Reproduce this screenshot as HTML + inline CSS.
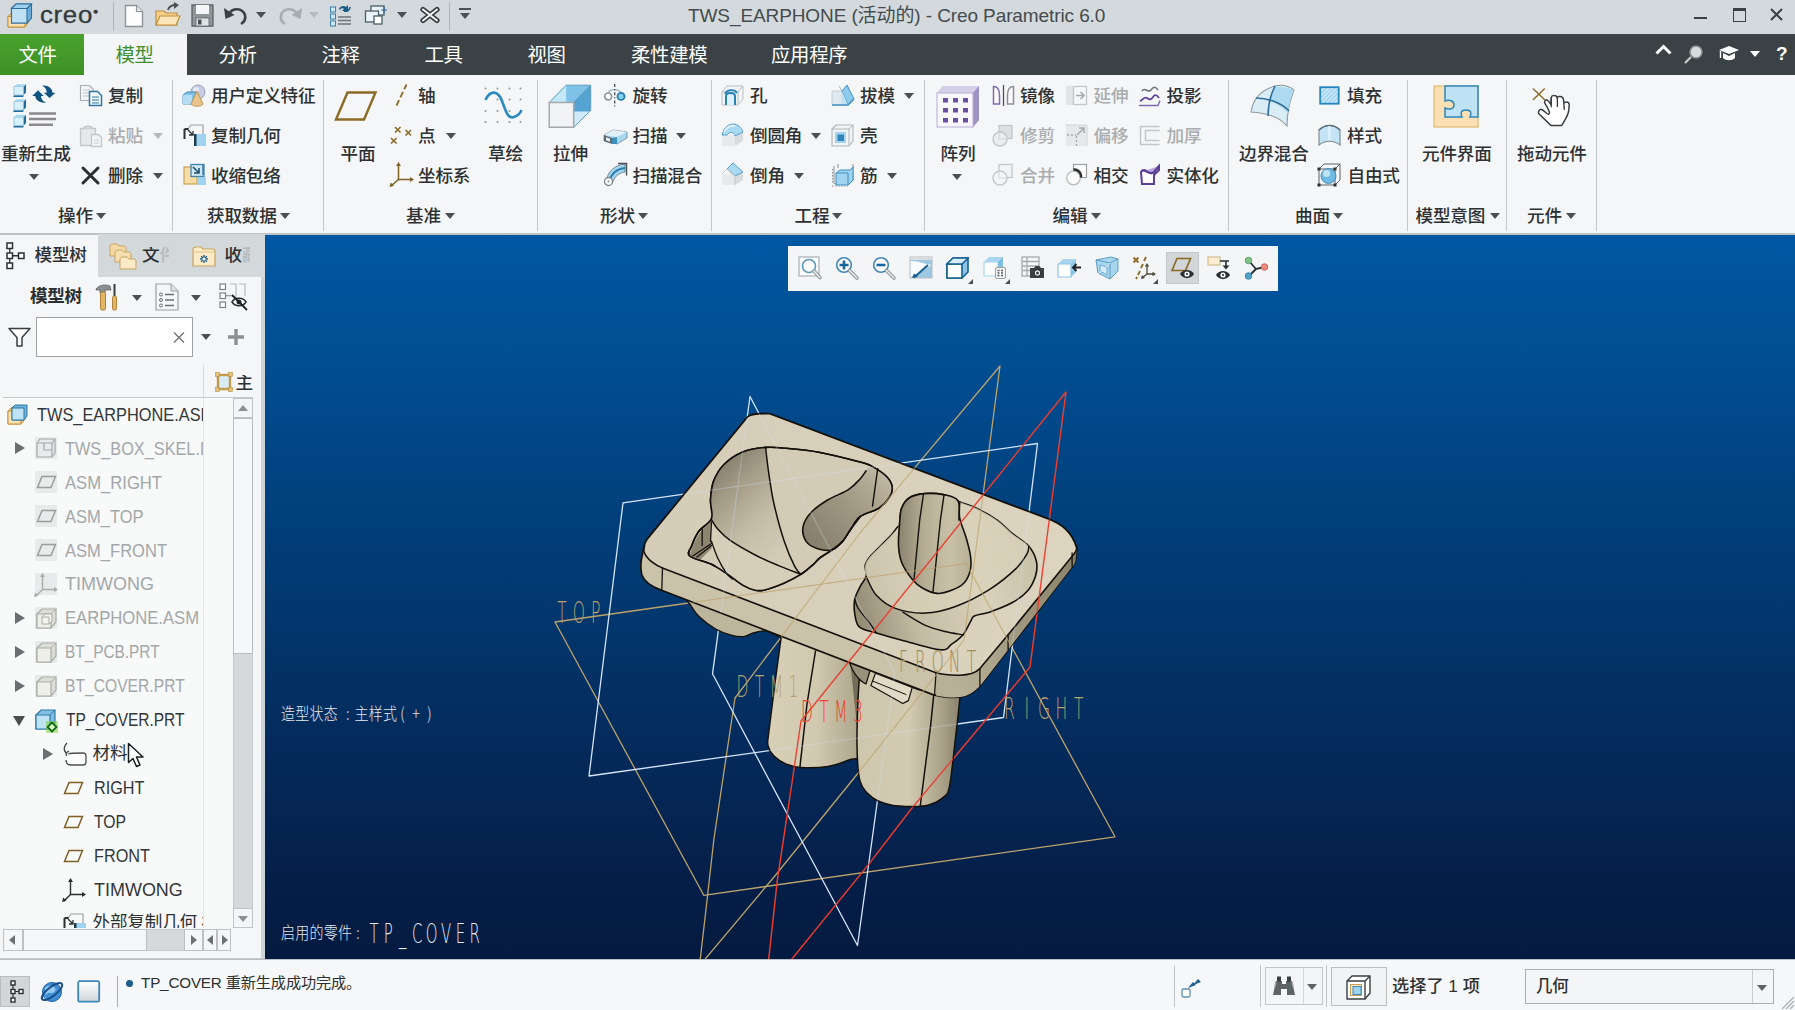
<!DOCTYPE html>
<html lang="zh-CN"><head><meta charset="utf-8"><title>TWS_EARPHONE - Creo Parametric 6.0</title>
<style>
html,body{margin:0;padding:0}
body{width:1795px;height:1010px;overflow:hidden;position:relative;background:#f5f6f7;
 font-family:"Liberation Sans","Noto Sans CJK SC",sans-serif;color:#2b2f31;font-size:17px;line-height:1}
.a{position:absolute;white-space:nowrap}
svg{position:absolute;overflow:visible}
#title{left:0;top:0;width:1795px;height:34px;background:#d3d9dc}
#tabs{left:0;top:34px;width:1795px;height:41px;background:#3a4245}
#ribbon{left:0;top:75px;width:1795px;height:158px;background:#f5f6f7}
#left{left:0;top:233px;width:265px;height:727px;background:#f5f6f7}
#view{left:265px;top:235px;width:1530px;height:724px;
 background:linear-gradient(180deg,#0058a2 0%,#014c90 20%,#01407c 38%,#02376e 52%,#042b5c 70%,#051f49 88%,#051a40 100%)}
#status{left:0;top:959px;width:1795px;height:51px;background:#f6f7f8}
.t{font-size:17.6px;color:#2d3133;letter-spacing:-0.2px;font-weight:500}
.d{color:#a9adaf}
.sep{width:1px;background:#c3c8cb;top:80px;height:151px}
.tab{font-size:19.4px;color:#fff;top:46.3px;letter-spacing:-0.3px}
.gl{font-size:17.6px;color:#2d3133;letter-spacing:-0.2px;font-weight:500}
.tri{width:0;height:0;border-left:5px solid transparent;border-right:5px solid transparent;border-top:6px solid #4a4f52}
.tri.d{border-top-color:#b5b9bb}
</style></head><body>
<div class="a" id="title"></div>
<div class="a" id="tabs"></div>
<div class="a" id="ribbon"></div>
<div class="a" id="left"></div>
<div class="a" id="view"></div>
<div class="a" id="status"></div>
<!-- TITLE BAR -->
<svg class="a" style="left:7px;top:3px" width="26" height="25" viewBox="0 0 26 25">
 <path d="M1 13.500l4-4h17v9l-4 5.500H1z" fill="#f1c27a" stroke="#c8923a" stroke-width="1"/>
 <path d="M1 13.500h17v10.500H1z" fill="#fbe0ae" stroke="#c8923a" stroke-width="1"/>
 <path d="M4.500 5.500l4.500-4.500h15.500v14l-4.500 5h-15.500z" fill="#6aaedb" stroke="#2f6f9c" stroke-width="1.100"/>
 <path d="M4.500 5.500h15.500v14.500H4.500z" fill="#bfe0f4" stroke="#2f6f9c" stroke-width="1.100"/>
 <path d="M20 5.500l4.500-4.500" stroke="#2f6f9c" stroke-width="1.100"/>
 <path d="M4.500 5.500l4.500-4.500h15.500l-4.500 4.500z" fill="#9fd0ee" stroke="#2f6f9c" stroke-width="1.100"/>
</svg>
<div class="a" style="left:40px;top:3.500px;font-size:23.500px;color:#33393c;letter-spacing:0.600px;font-family:'Liberation Sans',sans-serif;transform:scaleX(1.1);transform-origin:0 50%;-webkit-text-stroke:0.300px #33393c">creo<span style="font-size:8px;position:relative;top:-9px;left:0px">●</span></div>
<div class="a" style="left:113px;top:2px;width:1px;height:29px;background:#aeb4b7"></div>
<!-- new -->
<svg class="a" style="left:124px;top:4px" width="20" height="24" viewBox="0 0 20 24"><path d="M1.5 1.5h11l6 6v15h-17z" fill="#fdfdfd" stroke="#8d9396" stroke-width="1.4"/><path d="M12.5 1.5v6h6" fill="#e4e7e8" stroke="#8d9396" stroke-width="1.2"/></svg>
<!-- open -->
<svg class="a" style="left:154px;top:2px" width="28" height="26" viewBox="0 0 28 26"><path d="M2 9h8l2 2h11v12H2z" fill="#f5d08c" stroke="#c28f3c" stroke-width="1.2"/><path d="M2 23l4-9h20l-4 9z" fill="#fbe6b8" stroke="#c28f3c" stroke-width="1.2"/><path d="M14 8c1-4 4-5 8-5" fill="none" stroke="#4a4f52" stroke-width="1.8"/><path d="M20 0l5 3-5 4z" fill="#4a4f52"/></svg>
<!-- save -->
<svg class="a" style="left:191px;top:4px" width="23" height="23" viewBox="0 0 23 23"><path d="M1 1h21v21H1z" fill="#8f9699" stroke="#5d6467" stroke-width="1.3"/><rect x="5" y="1" width="13" height="9" fill="#f4f6f7"/><rect x="5" y="14" width="13" height="8" fill="#dfe3e5" stroke="#5d6467" stroke-width="0.8"/><rect x="7" y="15.5" width="3.5" height="5" fill="#4a5256"/></svg>
<!-- undo -->
<svg class="a" style="left:223px;top:5px" width="26" height="20" viewBox="0 0 26 20"><path d="M6 9c3-6 13-7 16 1 1 4-1 7-4 9" fill="none" stroke="#3a4043" stroke-width="2.6"/><path d="M1 3l1.5 11 9-4z" fill="#3a4043"/></svg>
<div class="a tri" style="left:256px;top:12px;border-top-color:#4a5053"></div>
<!-- redo -->
<svg class="a" style="left:277px;top:5px" width="26" height="20" viewBox="0 0 26 20"><path d="M20 9c-3-6-13-7-16 1-1 4 1 7 4 9" fill="none" stroke="#a7adb0" stroke-width="2.6"/><path d="M25 3l-1.5 11-9-4z" fill="#a7adb0"/></svg>
<div class="a tri" style="left:309px;top:12px;border-top-color:#b4babd"></div>
<!-- regen small -->
<svg class="a" style="left:329px;top:3px" width="24" height="25" viewBox="0 0 24 25"><g fill="#cfe8f6" stroke="#3f7fa8" stroke-width="1"><rect x="1.5" y="4" width="5" height="5"/><rect x="1.5" y="11" width="5" height="5"/><rect x="1.5" y="18" width="5" height="5"/></g><g stroke="#6d7376" stroke-width="1.6"><path d="M9 14h13M9 17.5h13M9 21h13"/></g><path d="M10 6c1-3 5-4 7-2l2-2v6h-6l2-2c-1-1-3-1-4 1z" fill="#175c86"/><path d="M21 4c0 3-3 5-6 4" fill="none" stroke="#175c86" stroke-width="1.6"/></svg>
<!-- windows -->
<svg class="a" style="left:364px;top:5px" width="24" height="21" viewBox="0 0 24 21"><rect x="7" y="1" width="13" height="9" fill="#e9f3f9" stroke="#4a5c68" stroke-width="1.3"/><rect x="1.5" y="6" width="13" height="11" fill="#e9f3f9" stroke="#4a5c68" stroke-width="1.3"/><rect x="10" y="11" width="8" height="8" fill="#fff" stroke="#4a5c68" stroke-width="1.3"/><path d="M17 5h6M20 2v6" stroke="#2f6f99" stroke-width="1.2"/></svg>
<div class="a tri" style="left:397px;top:12px;border-top-color:#4a5053"></div>
<!-- close win -->
<svg class="a" style="left:420px;top:7px" width="20" height="16" viewBox="0 0 20 16"><path d="M3 2.500l14 11M17 2.500L3 13.500" stroke="#33393c" stroke-width="5.200" stroke-linecap="round"/><path d="M3 2.500l14 11M17 2.500L3 13.500" stroke="#f4f6f7" stroke-width="2" stroke-linecap="round"/></svg>
<div class="a" style="left:449px;top:2px;width:1px;height:29px;background:#aeb4b7"></div>
<div class="a" style="left:459px;top:8px;width:12px;height:2px;background:#4a5053"></div>
<div class="a tri" style="left:460px;top:13px;border-top-color:#4a5053"></div>
<div class="a" style="left:688px;top:5.5px;font-size:19px;color:#454b4e;letter-spacing:-0.1px">TWS_EARPHONE (活动的) - Creo Parametric 6.0</div>
<div class="a" style="left:1694px;top:17px;width:13px;height:2px;background:#3a4043"></div>
<div class="a" style="left:1733px;top:8px;width:11px;height:10px;border:1.5px solid #3a4043;border-top-width:3px;box-sizing:content-box"></div>
<svg class="a" style="left:1769px;top:7px" width="15" height="15" viewBox="0 0 15 15"><path d="M2 2l11 11M13 2L2 13" stroke="#3a4043" stroke-width="2"/></svg>

<!-- TABS -->
<div class="a" style="left:0;top:34px;width:84px;height:41px;background:linear-gradient(180deg,#49a22c,#3d9126)"></div>
<div class="a" style="left:84px;top:34px;width:103px;height:41px;background:#f4f5f6"></div>
<div class="a tab" style="left:18.5px">文件</div>
<div class="a tab" style="left:115.5px;color:#3f8f2e">模型</div>
<div class="a tab" style="left:218.5px">分析</div>
<div class="a tab" style="left:321.5px">注释</div>
<div class="a tab" style="left:424.5px">工具</div>
<div class="a tab" style="left:527.5px">视图</div>
<div class="a tab" style="left:631px">柔性建模</div>
<div class="a tab" style="left:771px">应用程序</div>
<svg class="a" style="left:1655px;top:44px" width="17" height="11" viewBox="0 0 17 11"><path d="M1.5 9.5L8.5 2.5l7 7" fill="none" stroke="#fff" stroke-width="3"/></svg>
<svg class="a" style="left:1684px;top:43px" width="22" height="22" viewBox="0 0 22 22"><circle cx="12" cy="9" r="6" fill="#d9dcdd" stroke="#8a8f92" stroke-width="1.5"/><path d="M7 14L1 20" stroke="#c9cccd" stroke-width="2.2"/></svg>
<svg class="a" style="left:1718px;top:44px" width="22" height="19" viewBox="0 0 22 19"><path d="M1 6l10-4 10 4-10 4z" fill="#fff"/><path d="M5 9v5c3 3 9 3 12 0V9l-6 3z" fill="#fff"/><path d="M2.5 7v7" stroke="#fff" stroke-width="1.4"/></svg>
<div class="a tri" style="left:1750px;top:51px;border-top-color:#fff"></div>
<div class="a" style="left:1776px;top:44px;font-size:19px;font-weight:bold;color:#fff">?</div>
<!-- RIBBON -->
<div class="a sep" style="left:172px"></div>
<div class="a sep" style="left:323px"></div>
<div class="a sep" style="left:537px"></div>
<div class="a sep" style="left:711px"></div>
<div class="a sep" style="left:924px"></div>
<div class="a sep" style="left:1228px"></div>
<div class="a sep" style="left:1407px"></div>
<div class="a sep" style="left:1506px"></div>
<div class="a sep" style="left:1596px"></div>
<svg class="a" style="left:13px;top:84px" width="44" height="44" viewBox="0 0 44 44"><path d="M10.500 2.6l2.500-2.400v8.300l-2.500 2.600zM1 11.1h9.500l-0.200 1.800H0.200z" fill="#1f6b99"/><rect x="1" y="2.6" width="9.500" height="8.500" fill="#d9f0fb" stroke="#86b9d8" stroke-width="0.800"/><path d="M1 2.6l2.500-2.400h9.500l-2.500 2.400z" fill="#a9d6ef"/><path d="M10.500 17.6l2.500-2.400v8.300l-2.500 2.600zM1 26.1h9.500l-0.200 1.800H0.200z" fill="#1f6b99"/><rect x="1" y="17.6" width="9.500" height="8.500" fill="#d9f0fb" stroke="#86b9d8" stroke-width="0.800"/><path d="M1 17.6l2.500-2.400h9.500l-2.500 2.400z" fill="#a9d6ef"/><path d="M10.500 33.2l2.500-2.400v8.300l-2.500 2.600zM1 41.7h9.500l-0.200 1.800H0.200z" fill="#1f6b99"/><rect x="1" y="33.2" width="9.500" height="8.500" fill="#d9f0fb" stroke="#86b9d8" stroke-width="0.800"/><path d="M1 33.2l2.500-2.400h9.500l-2.500 2.400z" fill="#a9d6ef"/><g stroke="#8a8a8e" stroke-width="2.500"><path d="M16 29.500h27M16 35h27M16 40.800h24"/></g><path d="M25 6.300L30.800 12.100H28C28 15.500 30 17.500 33 18.500C27.500 19.500 22.500 16.500 22.300 12.100H19.200Z" fill="#0f5580"/><path d="M36.600 13.900L30.800 8.700H33.800C33.800 5.300 32 3 29.300 1.700C35 1 39.300 4.500 39.500 8.700H42.500Z" fill="#0f5580"/></svg>
<div class="a t" style="left:1px;top:145.7px;">重新生成</div>
<div class="a tri" style="left:29px;top:174px"></div>
<svg class="a" style="left:79px;top:84px" width="25" height="23" viewBox="0 0 25 23"><path d="M1.500 1.500h9l4 4v11h-13z" fill="#f4f5f6" stroke="#a9aeb1" stroke-width="1.2"/><path d="M4 6h7M4 9h7M4 12h7" stroke="#bfc4c6" stroke-width="1"/><path d="M10.500 7.500h8l4 4v10h-12z" fill="#f2f9fd" stroke="#2f78a4" stroke-width="1.5"/><path d="M13 13h7M13 16h7M13 19h7" stroke="#2f78a4" stroke-width="1.1"/></svg>
<div class="a t" style="left:108px;top:88.2px;">复制</div>
<svg class="a" style="left:79px;top:124px" width="25" height="24" viewBox="0 0 25 24"><path d="M1.500 4.500h15v17h-15z" fill="#e6e8e9" stroke="#c3c7c9" stroke-width="1.3"/><path d="M5 4.500v-2h3l1-1.500 1 1.500h3v2" fill="#d6d9db" stroke="#c3c7c9"/><path d="M12.500 10.500h7l3 3v9h-10z" fill="#f3f4f5" stroke="#c3c7c9" stroke-width="1.3"/><path d="M15 16h5M15 19h5" stroke="#c9cdcf"/></svg>
<div class="a t d" style="left:108px;top:128.2px;">粘贴</div>
<div class="a tri d" style="left:153px;top:133px"></div>
<svg class="a" style="left:81px;top:166px" width="19" height="19" viewBox="0 0 19 19"><path d="M2 2l15 15M17 2L2 17" stroke="#2b2f31" stroke-width="3" stroke-linecap="round"/></svg>
<div class="a t" style="left:108px;top:167.7px;">删除</div>
<div class="a tri" style="left:153px;top:172.5px"></div>
<div class="a gl" style="left:58px;top:208.2px;">操作</div>
<div class="a tri" style="left:96px;top:213px"></div>
<svg class="a" style="left:182px;top:84px" width="25" height="24" viewBox="0 0 25 24"><circle cx="16" cy="8" r="7" fill="#c6cde3" stroke="#8a93b8" stroke-width="0.8"/><circle cx="14" cy="6" r="3" fill="#eef1fa" opacity=".8"/><path d="M1 11l4-3h9v9l-4 3H1z" fill="#7fc1e6" stroke="#3b86b4" stroke-width="0.9"/><path d="M1 11h9v9H1z" fill="#b5ddf3"/><path d="M15 7l6 13c-2 3-10 3-12 0z" fill="#e9c58d" stroke="#b98e4a" stroke-width="0.9"/></svg>
<div class="a t" style="left:211px;top:88.2px;">用户定义特征</div>
<svg class="a" style="left:183px;top:123px" width="24" height="24" viewBox="0 0 24 24"><path d="M5 6l3-4h12v9" fill="none" stroke="#9aa0a3" stroke-width="1.2"/><path d="M1.500 6v10M1.500 6h4" stroke="#2b3033" stroke-width="2"/><path d="M5 7l5 5M10 8v4H6" stroke="#2b3033" stroke-width="1.3" fill="none"/><rect x="13" y="11" width="10" height="12" fill="#9fd3f0"/><rect x="11" y="11" width="2.500" height="12" fill="#1e3c50"/></svg>
<div class="a t" style="left:211px;top:128.2px;">复制几何</div>
<svg class="a" style="left:183px;top:163px" width="24" height="23" viewBox="0 0 24 23"><rect x="1" y="4" width="13" height="17" fill="#f7dca6" stroke="#c9a052" stroke-width="1.2"/><rect x="8" y="1.500" width="13" height="12" fill="#cfe9f7" stroke="#3f85b0" stroke-width="1.3"/><path d="M10 4l6 6M16 5v5h-5" stroke="#1d4f70" stroke-width="1.6" fill="none"/><rect x="15" y="14" width="8" height="8" fill="#9fd3f0"/><path d="M20 2v10" stroke="#2f78a4" stroke-width="1.5"/></svg>
<div class="a t" style="left:211px;top:167.7px;">收缩包络</div>
<div class="a gl" style="left:207px;top:208.2px;">获取数据</div>
<div class="a tri" style="left:280px;top:213px"></div>
<svg class="a" style="left:334px;top:90px" width="44" height="32" viewBox="0 0 44 32"><path d="M2 29.500L13.500 2.500H41.500L30 29.500Z" fill="none" stroke="#8b6a24" stroke-width="2.4" stroke-linejoin="miter"/></svg>
<div class="a t" style="left:340.5px;top:145.7px;">平面</div>
<svg class="a" style="left:394px;top:83px" width="14" height="24" viewBox="0 0 14 24"><path d="M2.500 22.500L12.500 1.500" stroke="#8b6a24" stroke-width="1.8" stroke-dasharray="6 3"/></svg>
<div class="a t" style="left:418px;top:88.2px;">轴</div>
<svg class="a" style="left:390px;top:126px" width="24" height="18" viewBox="0 0 24 18"><g stroke="#8b6a24" stroke-width="1.600"><path d="M5 1l5.500 5.500M10.500 1l-5.500 5.500"/><path d="M15.500 4l5.500 5.500M21 4l-5.500 5.500"/><path d="M1 12l5.500 5.500M6.500 12l-5.500 5.500"/></g></svg>
<div class="a t" style="left:418px;top:128.2px;">点</div>
<div class="a tri" style="left:446px;top:133px"></div>
<svg class="a" style="left:389px;top:162px" width="25" height="25" viewBox="0 0 25 25"><g stroke="#7d6125" stroke-width="1.500" fill="none"><path d="M9.500 2v15.500H23"/><path d="M9.500 17.500L2 24"/></g><g fill="#7d6125"><path d="M9.500 0l-2.500 4h5z"/><path d="M25 17.500l-4-2.500v5z"/><path d="M0.500 25l1.200-4.600 3.300 3.300z"/></g></svg>
<div class="a t" style="left:418px;top:167.7px;">坐标系</div>
<svg class="a" style="left:484px;top:87px" width="39" height="37" viewBox="0 0 39 37"><g fill="#8f9599"><circle cx="1.500" cy="1.500" r="1"/><circle cx="13.500" cy="1.500" r="1"/><circle cx="25.500" cy="1.500" r="1"/><circle cx="36.500" cy="1.500" r="1"/><circle cx="13.500" cy="12.500" r="1"/><circle cx="25.500" cy="12.500" r="1"/><circle cx="36.500" cy="12.500" r="1"/><circle cx="1.500" cy="24" r="1"/><circle cx="13.500" cy="24" r="1"/><circle cx="25.500" cy="24" r="1"/><circle cx="1.500" cy="35" r="1"/><circle cx="13.500" cy="35" r="1"/><circle cx="25.500" cy="35" r="1"/><circle cx="36.500" cy="35" r="1"/></g><path d="M1.500 13C6 3 14 3 18 14s6 18 12 16 7-6 7.500-7" fill="none" stroke="#2b8ac0" stroke-width="2.600"/></svg>
<div class="a t" style="left:488px;top:145.7px;">草绘</div>
<div class="a gl" style="left:406px;top:208.2px;">基准</div>
<div class="a tri" style="left:445px;top:213px"></div>
<svg class="a" style="left:548px;top:84px" width="45" height="44" viewBox="0 0 45 44"><path d="M1.200 18.500L18.200 1.200H42.700L25.700 18.500Z" fill="#7ec2e8"/><path d="M1.200 18.500L18.200 1.200V18.500Z" fill="#c4e7f9"/><path d="M25.700 18.500L42.700 1.200V26.300L25.700 43.300Z" fill="#55a3d0"/><path d="M25.700 27.500H41.500L25.700 43.300Z" fill="#cfebf9"/><path d="M1.200 18.500L18.200 1.200H42.700V26.300L25.700 43.300M25.700 18.500L42.700 1.200" fill="none" stroke="#5b9cc2" stroke-width="1"/><path d="M1.200 18.500H25.700V43.300H1.200Z" fill="#f2f3f5" stroke="#a3aaae" stroke-width="1.500"/></svg>
<div class="a t" style="left:553px;top:145.7px;">拉伸</div>
<svg class="a" style="left:603px;top:83px" width="24" height="24" viewBox="0 0 24 24"><path d="M5.200 10C7 5.500 16 5.500 18 10" fill="none" stroke="#8fb1c4" stroke-width="1.200"/><circle cx="5.200" cy="13.400" r="3.400" fill="#fff" stroke="#8f9699" stroke-width="1.700"/><circle cx="18" cy="13.400" r="3.500" fill="#86d3f6" stroke="#2a7fae" stroke-width="1.900"/><path d="M11.700 1v23" stroke="#4a4f52" stroke-width="1.300" stroke-dasharray="3 2 1.200 2"/></svg>
<div class="a t" style="left:632.5px;top:88.2px;">旋转</div>
<svg class="a" style="left:603px;top:128px" width="25" height="17" viewBox="0 0 25 17"><path d="M1 7l9-5 14 2v6l-10 6L1 13z" fill="#a7d6ef" stroke="#6d8797" stroke-width="0.8"/><path d="M1 7l9-5 14 2-10 5z" fill="#dff0f9"/><path d="M1 7l8 3v6l-8-3z" fill="#5f6a70"/><path d="M3 9.200l4 1.500v3L3 12.200z" fill="#e7f3fa"/><path d="M9 10l5-1v7l-5 0z" fill="#3f8fbd"/></svg>
<div class="a t" style="left:632.5px;top:128.2px;">扫描</div>
<div class="a tri" style="left:676px;top:133px"></div>
<svg class="a" style="left:603px;top:162px" width="25" height="24" viewBox="0 0 25 24"><path d="M3 19C5 9 12 3 22 2v8C15 11 11 15 9 22z" fill="#a7d6ef" stroke="#6d8797" stroke-width="1"/><path d="M6 20C8 12 13 7 22 6" fill="none" stroke="#2f7fae" stroke-width="2"/><circle cx="5.500" cy="19.500" r="4" fill="#fff" stroke="#7d868b" stroke-width="1.3"/><circle cx="5.500" cy="19.500" r="1" fill="#7d868b"/><path d="M15 1.500h8.500v12" fill="none" stroke="#4a4f52" stroke-width="1.4"/></svg>
<div class="a t" style="left:632.5px;top:167.7px;">扫描混合</div>
<div class="a gl" style="left:600px;top:208.2px;">形状</div>
<div class="a tri" style="left:638px;top:213px"></div>
<svg class="a" style="left:721px;top:84px" width="24" height="23" viewBox="0 0 24 23"><path d="M1 8l5-6h16v13l-5 6H1z" fill="#f1f3f4" stroke="#b9c0c4" stroke-width="1"/><path d="M17 8l5-6M1 8h16v13" fill="none" stroke="#b9c0c4"/><path d="M5 21v-9c0-4 9-4 9 0v9" fill="#dff1fa" stroke="#2583ba" stroke-width="2"/><path d="M4 10c2-5 10-5 12-1" fill="none" stroke="#2583ba" stroke-width="1.800"/></svg>
<div class="a t" style="left:750px;top:88.2px;">孔</div>
<svg class="a" style="left:721px;top:123px" width="24" height="24" viewBox="0 0 24 24"><path d="M1 12h13v11H1z" fill="#e7e9ea"/><path d="M14 12l8-4v10l-8 5z" fill="#d9dcde"/><path d="M1 12C3 4 8 1 12 1c5 0 9 4 10 8l-8 4C13 9 9 8 6 12z" fill="#a9daf4" stroke="#4d9bc9" stroke-width="0.9"/><path d="M3 9C6 3 11 2 14 3" fill="none" stroke="#fff" stroke-width="1.500" opacity=".8"/></svg>
<div class="a t" style="left:750px;top:128.2px;">倒圆角</div>
<div class="a tri" style="left:811px;top:133px"></div>
<svg class="a" style="left:721px;top:162px" width="24" height="24" viewBox="0 0 24 24"><path d="M1 12h13v11H1z" fill="#e7e9ea"/><path d="M14 14l8-4v8l-8 5z" fill="#d9dcde"/><path d="M6 7l6-6 10 9-8 4z" fill="#a9daf4" stroke="#4d9bc9" stroke-width="0.9"/><path d="M1 12l5-5 8 7v9" fill="none" stroke="#c5c9cb"/></svg>
<div class="a t" style="left:750px;top:167.7px;">倒角</div>
<div class="a tri" style="left:794px;top:172.5px"></div>
<svg class="a" style="left:831px;top:84px" width="24" height="23" viewBox="0 0 24 23"><path d="M1 7h10v14H1z" fill="#dfe9ee" stroke="#b9c6cd" stroke-width="0.8"/><path d="M11 7l5-6 7 14-6 6z" fill="#8dcbed" stroke="#3f90c0" stroke-width="1"/><path d="M11 7l6 14H1l10 0z" fill="#bfe2f5"/><path d="M1 21h16l6-6" fill="none" stroke="#3f90c0" stroke-width="1.600"/><path d="M8 2l3 5" stroke="#9aa3a8" stroke-width="0.8"/></svg>
<div class="a t" style="left:860px;top:88.2px;">拔模</div>
<div class="a tri" style="left:904px;top:93px"></div>
<svg class="a" style="left:831px;top:124px" width="24" height="23" viewBox="0 0 24 23"><path d="M1 5l4-4h17v16l-4 5H1z" fill="#f1f3f4" stroke="#aeb6ba" stroke-width="1.1"/><path d="M1 5h17v17M18 5l4-4" fill="none" stroke="#aeb6ba"/><rect x="4" y="8" width="11" height="11" fill="#9fd3f0"/><rect x="6.500" y="10.500" width="6.500" height="6.500" fill="#2f86bb"/></svg>
<div class="a t" style="left:860px;top:128.2px;">壳</div>
<svg class="a" style="left:831px;top:163px" width="25" height="24" viewBox="0 0 25 24"><path d="M3 3v17l4 2M7 1v4M22 1v16l-5 5" fill="none" stroke="#8d979c" stroke-width="1.1"/><path d="M5 10l4-3h10l3-3v13l-5 5H5z" fill="#9fd3f0" stroke="#3f90c0" stroke-width="1"/><path d="M5 10h12v12" fill="none" stroke="#3f90c0"/><path d="M1 23h16" stroke="#8d979c" stroke-dasharray="1.500 1.500"/><path d="M1.500 6v14" stroke="#8d979c" stroke-dasharray="1.500 1.500"/></svg>
<div class="a t" style="left:860px;top:167.7px;">筋</div>
<div class="a tri" style="left:887px;top:172.5px"></div>
<div class="a gl" style="left:794.5px;top:208.2px;">工程</div>
<div class="a tri" style="left:832px;top:213px"></div>
<svg class="a" style="left:936px;top:85px" width="44" height="43" viewBox="0 0 44 43"><path d="M1 8l6-7h36v34l-6 7H1z" fill="#b8aed6"/><path d="M1 8l6-7h36l-6 7z" fill="#d5cfe8"/><path d="M37 8l6-7v34l-6 7z" fill="#9f93c6"/><rect x="1" y="8" width="36" height="34" fill="#f7f7fa" stroke="#b8aed6" stroke-width="1"/><g fill="#6a4fa0"><rect x="7" y="13" width="5" height="4.500"/><rect x="17" y="13" width="5" height="4.500"/><rect x="27" y="13" width="5" height="4.500"/><rect x="7" y="23" width="5" height="4.500"/><rect x="17" y="23" width="5" height="4.500"/><rect x="27" y="23" width="5" height="4.500"/><rect x="7" y="33" width="5" height="4.500"/><rect x="17" y="33" width="5" height="4.500"/><rect x="27" y="33" width="5" height="4.500"/></g></svg>
<div class="a t" style="left:940.5px;top:145.7px;">阵列</div>
<div class="a tri" style="left:952px;top:174px"></div>
<svg class="a" style="left:992px;top:85px" width="23" height="21" viewBox="0 0 23 21"><path d="M1.500 1.500c4 0 6 3 6 9v8.500h-6z" fill="#fbfbfd" stroke="#7f6bb0" stroke-width="1.500"/><path d="M21.500 1.500c-4 0-6 3-6 9v8.500h6z" fill="#fbfbfd" stroke="#8b8f94" stroke-width="1.500"/><path d="M11.500 0v21" stroke="#4a4f52" stroke-width="1.300"/></svg>
<div class="a t" style="left:1020px;top:88.2px;">镜像</div>
<svg class="a" style="left:991px;top:124px" width="24" height="23" viewBox="0 0 24 23"><rect x="8" y="1.500" width="13" height="13" fill="#dddfe1" stroke="#c4c7c9" stroke-width="1.300"/><circle cx="9" cy="15" r="7" fill="#ecedee" stroke="#c4c7c9" stroke-width="1.400"/><path d="M8 9v6h7" fill="none" stroke="#d3d6d8"/></svg>
<div class="a t d" style="left:1020px;top:128.2px;">修剪</div>
<svg class="a" style="left:991px;top:163px" width="24" height="23" viewBox="0 0 24 23"><rect x="8" y="1.500" width="13" height="13" fill="#f3f4f5" stroke="#c4c7c9" stroke-width="1.300"/><circle cx="9" cy="15" r="7" fill="#f3f4f5" stroke="#c4c7c9" stroke-width="1.400"/><path d="M8 9v6h7" fill="none" stroke="#d3d6d8"/></svg>
<div class="a t d" style="left:1020px;top:167.7px;">合并</div>
<svg class="a" style="left:1065px;top:85px" width="23" height="21" viewBox="0 0 23 21"><rect x="1" y="1" width="8" height="19" fill="#e1e3e5"/><rect x="8.500" y="1.500" width="13" height="18" fill="#f6f7f8" stroke="#c4c7c9" stroke-width="1.300"/><path d="M11 10.500h8M15.500 7l3.500 3.500-3.500 3.500" stroke="#a5a9ac" stroke-width="1.600" fill="none"/></svg>
<div class="a t d" style="left:1093.5px;top:88.2px;">延伸</div>
<svg class="a" style="left:1065px;top:124px" width="23" height="23" viewBox="0 0 23 23"><rect x="1" y="1" width="21" height="21" fill="#e6e8e9"/><path d="M1 1h21v21" fill="none" stroke="#d0d3d5"/><path d="M2 11h9M11.500 12v10" stroke="#a5a9ac" stroke-width="1.300" stroke-dasharray="2 2"/><path d="M12 11l7-7M14 4h5v5" stroke="#a5a9ac" stroke-width="1.400" fill="none"/></svg>
<div class="a t d" style="left:1093.5px;top:128.2px;">偏移</div>
<svg class="a" style="left:1065px;top:163px" width="23" height="23" viewBox="0 0 23 23"><rect x="8.500" y="1.500" width="13" height="13" fill="#fdfdfd" stroke="#9a9fa2" stroke-width="1.200"/><circle cx="8.500" cy="15" r="6.800" fill="#fdfdfd" stroke="#b9bdc0" stroke-width="1.300"/><path d="M8.500 6.500c4-.5 8 3 7.500 8" fill="none" stroke="#2b2f31" stroke-width="2.400"/></svg>
<div class="a t" style="left:1093.5px;top:167.7px;">相交</div>
<svg class="a" style="left:1138px;top:86px" width="23" height="21" viewBox="0 0 23 21"><path d="M4 5c3-5 6 3 9-1s5-3 7 0" fill="none" stroke="#6d7275" stroke-width="1.500"/><path d="M2 15c3-1 4-5 7-3s4 2 6-1 4-2 6 1" fill="none" stroke="#5b3f96" stroke-width="1.700"/><path d="M1 19.500h19l2-5" fill="none" stroke="#7f6bb0" stroke-width="1.400"/></svg>
<div class="a t" style="left:1166.5px;top:88.2px;">投影</div>
<svg class="a" style="left:1139px;top:125px" width="22" height="21" viewBox="0 0 22 21"><path d="M20.500 1.500h-19v18h19M20.500 5.500h-14v10h14" fill="none" stroke="#c4c7c9" stroke-width="1.500"/></svg>
<div class="a t d" style="left:1166.5px;top:128.2px;">加厚</div>
<svg class="a" style="left:1138px;top:163px" width="24" height="23" viewBox="0 0 24 23"><path d="M3 9c4-6 8 5 13 0l5-6v4l-5 5v9h-12z" fill="#fdfdfe" stroke="#5b3f96" stroke-width="2"/><path d="M3 9c4-6 8 5 13 0l5-6" fill="#b9a6dd" stroke="#5b3f96" stroke-width="2.200"/></svg>
<div class="a t" style="left:1166.5px;top:167.7px;">实体化</div>
<div class="a gl" style="left:1052.5px;top:208.2px;">编辑</div>
<div class="a tri" style="left:1091px;top:213px"></div>
<svg class="a" style="left:1249px;top:84px" width="47" height="44" viewBox="0 0 47 44"><path d="M2 28C4 15 12 6 26 2c8-2 14 0 19 4-4 10-7 22-7 36-7-9-22-13-36-14z" fill="#d9edf7" stroke="#8d979c" stroke-width="1.100"/><path d="M20 17C27 19 35 24 39 30c1-9 3-17 6-24C38 3 31 2 25 3c-2 4-4 9-5 14z" fill="#a9d7ef" opacity=".9"/><path d="M26 2c-4 8-7 19-7 30" fill="none" stroke="#2d6f97" stroke-width="1.500"/><path d="M7 14c12 0 26 5 33 13" fill="none" stroke="#2d6f97" stroke-width="1.500"/></svg>
<div class="a t" style="left:1239px;top:145.7px;">边界混合</div>
<svg class="a" style="left:1319px;top:86px" width="21" height="19" viewBox="0 0 21 19"><defs><pattern id="hat" width="3" height="3" patternUnits="userSpaceOnUse" patternTransform="rotate(45)"><rect width="3" height="3" fill="#cfeaf8"/><rect width="1.200" height="3" fill="#8ecbeb"/></pattern></defs><rect x="1.200" y="1.200" width="18.500" height="16.500" fill="url(#hat)" stroke="#2786bd" stroke-width="1.800"/></svg>
<div class="a t" style="left:1347px;top:88.2px;">填充</div>
<svg class="a" style="left:1317px;top:124px" width="25" height="23" viewBox="0 0 25 23"><path d="M2 6c6-6 15-6 21 0v15c-6-5-15-5-21 0z" fill="#c3e4f5" stroke="#7d8e98" stroke-width="1.200"/><path d="M2 6c6-6 15-6 21 0" fill="none" stroke="#5d6b73" stroke-width="1.400"/><path d="M12.500 2v14" stroke="#e9f5fb" stroke-width="3" opacity=".6"/></svg>
<div class="a t" style="left:1347px;top:128.2px;">样式</div>
<svg class="a" style="left:1317px;top:162px" width="25" height="25" viewBox="0 0 25 25"><path d="M2 7l5-5h16v16l-5 5H2z" fill="none" stroke="#5d6367" stroke-width="1"/><path d="M2 7h16v16M18 7l5-5" fill="none" stroke="#5d6367" stroke-width="1"/><circle cx="11.500" cy="14" r="7.500" fill="#6fb9e2" stroke="#2f7fae" stroke-width="0.800"/><circle cx="9.500" cy="11.500" r="3.500" fill="#cfeaf8" opacity=".85"/><g fill="#2b2f31"><rect x="0.500" y="5.500" width="3" height="3"/><rect x="16.500" y="5.500" width="3" height="3"/><rect x="0.500" y="21.500" width="3" height="3"/><rect x="16.500" y="21.500" width="3" height="3"/></g></svg>
<div class="a t" style="left:1347.5px;top:167.7px;">自由式</div>
<div class="a gl" style="left:1295px;top:208.2px;">曲面</div>
<div class="a tri" style="left:1332.5px;top:213px"></div>
<svg class="a" style="left:1433px;top:85px" width="46" height="43" viewBox="0 0 46 43"><rect x="1" y="1" width="44" height="41" fill="#fbe0b4" stroke="#e5b96c" stroke-width="1.200"/><path d="M12 1h33v31h-8c2-4 1-7-4-7s-6 3-4 7h-8c-4 0-9 0-9 0v-9c5 2 9 1 9-3s-4-6-9-4z" fill="#bfe3f5" stroke="#2f86bb" stroke-width="1.500"/></svg>
<div class="a t" style="left:1422px;top:145.7px;">元件界面</div>
<div class="a gl" style="left:1415.5px;top:208.2px;">模型意图</div>
<div class="a tri" style="left:1489.5px;top:213px"></div>
<svg class="a" style="left:1531px;top:86px" width="42" height="42" viewBox="0 0 42 42"><path d="M1.900 2.500l11.800 11.300M13.700 2.500L1.900 14.100" stroke="#8b6a24" stroke-width="1.400"/><path d="M13.700 15.600C14 14.200 15 13.600 15.500 13.800C16.500 14 17.300 14.800 17.900 15.600L19.900 18.500L20.300 11.500C20.600 9.800 22 9.400 23 9.500C24.500 9.500 25.700 10.300 25.900 11.300L26.100 12C26.500 10.900 27.400 10.400 28.200 10.500C29.500 10.400 30.800 10.600 31.300 11.300C32.200 12 32.500 13 32.600 14.100L32.800 17.200C33.300 16.400 34.200 16.100 34.900 16.200C36 16 37 16.200 37.500 16.700C38.100 17.500 38.300 18.600 38.200 19.800L37.500 26C36.800 28.700 35.600 31 34.400 33.200L30.800 39.400H19.900L8.100 28C7.400 27.200 7.300 26.200 7.600 25.400C8 24.300 8.800 23.700 9.600 23.600C10.600 23.500 11.500 23.800 12.200 24.400L15.800 27.500C16.600 28.100 17.400 28.300 17.900 28C18.500 27.600 18.600 26.800 18.400 26L15.800 20.300L13.700 17.200C13.500 16.700 13.500 16.100 13.700 15.600Z" fill="#fff" stroke="#3a3f42" stroke-width="1.500" stroke-linejoin="round"/><path d="M20.200 12v9.300M26.400 12v9.100M32.800 17.200l0.500 6.700" stroke="#3a3f42" stroke-width="1.400" fill="none"/></svg>
<div class="a t" style="left:1517px;top:145.7px;">拖动元件</div>
<div class="a gl" style="left:1527px;top:208.2px;">元件</div>
<div class="a tri" style="left:1566px;top:213px"></div>
<!-- LEFT PANEL -->
<div class="a" style="left:0;top:233px;width:1795px;height:2px;background:#bcc2c5"></div>
<div class="a" style="left:98px;top:234px;width:167px;height:43px;background:#d3d8db"></div>
<div class="a" style="left:261px;top:277px;width:4px;height:682px;background:#cdd4d8"></div>
<svg class="a" style="left:6px;top:242px" width="19" height="27" viewBox="0 0 19 27"><g fill="#fff" stroke="#2b2f31" stroke-width="1.500"><rect x="1" y="1" width="5.500" height="5.500"/><rect x="1" y="11" width="5.500" height="5.500"/><rect x="1" y="21" width="5.500" height="5.500"/><rect x="12.500" y="11" width="5.500" height="5.500"/></g><path d="M3.750 6.500v4.500M3.750 16.500v4.500M6.500 13.750h6" stroke="#2b2f31" stroke-width="1.300"/></svg>
<div class="a t" style="left:34.500px;top:246.500px">模型树</div>
<svg class="a" style="left:109px;top:243px" width="28" height="28" viewBox="0 0 28 28"><g><path d="M1 4c0-2 1-3 3-3h4l2 2h5c1 0 2 1 2 2v8H1z" fill="#f3d9a4" stroke="#c9a562" stroke-width="1"/></g><g transform="translate(5,6)"><path d="M1 4c0-2 1-3 3-3h4l2 2h5c1 0 2 1 2 2v8H1z" fill="#f6e0b2" stroke="#c9a562" stroke-width="1"/></g><g transform="translate(10,13)"><path d="M1 4c0-2 1-3 3-3h4l2 2h5c1 0 2 1 2 2v8H1z" fill="#fbeac6" stroke="#c9a562" stroke-width="1"/></g></svg>
<div class="a t" style="left:142px;top:246.500px;width:27px;overflow:hidden">文<span style="color:#b4b9bc">件</span></div>
<svg class="a" style="left:192px;top:246px" width="24" height="22" viewBox="0 0 24 22"><path d="M1 4c0-2 1-3 3-3h5l2 2h10c1 0 2 1 2 2v15H1z" fill="#fbeac6" stroke="#c9a562" stroke-width="1.200"/><path d="M1 6h22" stroke="#e5c98d"/><g stroke="#1d5d8f" stroke-width="1.400"><path d="M12 9v8M8 13h8M9.200 10.200l5.600 5.600M14.800 10.200l-5.600 5.600"/></g><circle cx="12" cy="13" r="1.600" fill="#fff"/></svg>
<div class="a t" style="left:224.500px;top:246.500px;width:25px;overflow:hidden">收<span style="color:#b4b9bc">藏</span></div>
<div class="a t" style="left:30px;top:287.500px;font-weight:bold;color:#2b2f31;letter-spacing:-0.3px">模型树</div>
<svg class="a" style="left:95px;top:283px" width="25" height="28" viewBox="0 0 25 28"><path d="M1 6c3-4 9-5 14-3l1 4h-6v3H5V7H1z" fill="#8a8f92" stroke="#5d6265" stroke-width="0.800"/><rect x="5.500" y="9" width="5" height="18" rx="1.500" fill="#e2b466" stroke="#a77a2e" stroke-width="0.900"/><path d="M19.500 1v12" stroke="#3a3f42" stroke-width="2"/><rect x="17.500" y="13" width="4" height="14" rx="1.500" fill="#e2b466" stroke="#a77a2e" stroke-width="0.900"/></svg>
<div class="a tri" style="left:132px;top:294.5px;border-top-color:#4a4f52"></div>
<svg class="a" style="left:155px;top:283px" width="24" height="28" viewBox="0 0 24 28"><path d="M1 1h15l7 7v19H1z" fill="#f4f6f7" stroke="#9aa0a3" stroke-width="1.200"/><path d="M16 1v7h7" fill="#dfe3e5" stroke="#9aa0a3"/><g stroke="#6b7174" stroke-width="1.300"><path d="M10 11.500h9M10 17h9M10 22.500h9"/></g><g fill="none" stroke="#6b7174"><circle cx="6" cy="11.500" r="1.500"/><circle cx="6" cy="17" r="1.500"/><circle cx="6" cy="22.500" r="1.500"/></g></svg>
<div class="a tri" style="left:191px;top:294.5px;border-top-color:#4a4f52"></div>
<svg class="a" style="left:219px;top:283px" width="30" height="29" viewBox="0 0 30 29"><g fill="#fff" stroke="#7b8184" stroke-width="1.200"><rect x="1" y="1" width="5.500" height="5.500"/><rect x="1" y="10" width="5.500" height="5.500"/><rect x="1" y="19" width="5.500" height="5.500"/></g><g fill="none" stroke="#b5babd" stroke-width="1.200"><path d="M11 1h6v18M20 1h6v12"/></g><path d="M6.500 12.750h6" stroke="#7b8184"/><path d="M13 19c3-5 11-5 14 0-3 5-11 5-14 0z" fill="#fff" stroke="#2b2f31" stroke-width="1.500"/><circle cx="20" cy="19" r="2.500" fill="#2b2f31"/><path d="M13 12l15 15" stroke="#1b1f21" stroke-width="1.800"/></svg>
<svg class="a" style="left:8px;top:327px" width="23" height="20" viewBox="0 0 23 20"><path d="M1 1.500h21l-8 9v8.500h-5v-8.500z" fill="#fdfdfd" stroke="#3a3f42" stroke-width="1.500" stroke-linejoin="round"/></svg>
<div class="a" style="left:36px;top:317px;width:157px;height:40px;background:#fff;border:1px solid #9ea3a6;box-sizing:border-box"></div>
<svg class="a" style="left:173px;top:332px" width="12" height="11" viewBox="0 0 12 11"><path d="M1 0.500l10 10M11 0.500L1 10.500" stroke="#6b7174" stroke-width="1.300"/></svg>
<div class="a tri" style="left:201px;top:334px;border-top-color:#4a4f52"></div>
<svg class="a" style="left:228px;top:329px" width="16" height="16" viewBox="0 0 16 16"><path d="M8 0v16M0 8h16" stroke="#8a8f92" stroke-width="3.400"/></svg>
<div class="a" style="left:203px;top:365px;width:1px;height:563px;background:#d5d9db"></div>
<svg class="a" style="left:215px;top:372px" width="18" height="20" viewBox="0 0 18 20"><rect x="3" y="3" width="12" height="14" fill="#d6ecf7" stroke="#c29a4c" stroke-width="2.400"/><g fill="#e5bf77" stroke="#b88f42" stroke-width="0.600"><rect x="0.500" y="0.500" width="4" height="4"/><rect x="13.500" y="0.500" width="4" height="4"/><rect x="0.500" y="15.500" width="4" height="4"/><rect x="13.500" y="15.500" width="4" height="4"/></g></svg>
<div class="a t" style="left:235.500px;top:374.500px;width:18px;overflow:hidden">主</div>
<div class="a" style="left:3px;top:397px;width:250px;height:1px;background:#c5c9cb"></div>
<div class="a" style="left:0;top:398px;width:233px;height:530px;background:#f8f9f9"></div>
<div class="a" style="left:203px;top:398px;width:1px;height:530px;background:#e3e6e8"></div>
<div class="a" style="left:233px;top:398px;width:20px;height:530px;background:#d6d9db;border:1px solid #c5c9cb;box-sizing:border-box"></div>
<div class="a" style="left:233px;top:398px;width:20px;height:20px;background:#f4f5f6;border:1px solid #c0c4c6;box-sizing:border-box"></div>
<div class="a" style="left:233px;top:418px;width:20px;height:236px;background:#f6f7f8;border:1px solid #b9bdc0;box-sizing:border-box"></div>
<div class="a" style="left:233px;top:908px;width:20px;height:20px;background:#f4f5f6;border:1px solid #c0c4c6;box-sizing:border-box"></div>
<div class="a tri" style="left:238px;top:405px;border-top:none;border-bottom:6px solid #8a8f92"></div>
<div class="a tri" style="left:238px;top:916px;border-top-color:#8a8f92"></div>
<div class="a" style="left:3px;top:929px;width:228px;height:22px;background:#d6d9db;border:1px solid #c5c9cb;box-sizing:border-box"></div>
<div class="a" style="left:3px;top:929px;width:20px;height:22px;background:#f5f6f7;border:1px solid #bdc1c4;box-sizing:border-box"></div>
<div class="a" style="left:23px;top:929px;width:124px;height:22px;background:#f5f6f7;border:1px solid #bdc1c4;box-sizing:border-box"></div>
<div class="a" style="left:184px;top:929px;width:19px;height:22px;background:#f5f6f7;border:1px solid #bdc1c4;box-sizing:border-box"></div>
<div class="a" style="left:203px;top:929px;width:14px;height:22px;background:#f5f6f7;border:1px solid #bdc1c4;box-sizing:border-box"></div>
<div class="a" style="left:217px;top:929px;width:14px;height:22px;background:#f5f6f7;border:1px solid #bdc1c4;box-sizing:border-box"></div>
<div class="a" style="left:9px;top:935px;width:0;height:0;border-top:5px solid transparent;border-bottom:5px solid transparent;border-right:6px solid #6b7174"></div>
<div class="a" style="left:191px;top:935px;width:0;height:0;border-top:5px solid transparent;border-bottom:5px solid transparent;border-left:6px solid #6b7174"></div>
<div class="a" style="left:207px;top:935px;width:0;height:0;border-top:5px solid transparent;border-bottom:5px solid transparent;border-right:6px solid #6b7174"></div>
<div class="a" style="left:222px;top:935px;width:0;height:0;border-top:5px solid transparent;border-bottom:5px solid transparent;border-left:6px solid #6b7174"></div>
<svg class="a" style="left:7px;top:404.2px" width="21" height="21" viewBox="0 0 21 21"><path d="M1 7l4-4h13v12l-4 5H1z" fill="#f3c67c" stroke="#c8923a" stroke-width="1"/><path d="M1 7h13v13H1z" fill="#fbe3b6" stroke="#c8923a"/><path d="M5 4l3-3h12v11l-3 4H5z" fill="#6fb4d9" stroke="#2f78a4" stroke-width="1"/><path d="M5 4h12v12H5z" fill="#bfe3f5" stroke="#2f78a4"/></svg>
<div class="a" style="left:36.5px;top:403.7px;width:166.5px;height:24px;overflow:hidden"><div class="a" style="left:0;top:0;font-size:18.500px;line-height:22px;color:#33373a;transform:scaleX(0.884);transform-origin:0 50%">TWS_EARPHONE.ASM</div></div>
<div class="a" style="left:15px;top:442.15px;width:0;height:0;border-top:6px solid transparent;border-bottom:6px solid transparent;border-left:10px solid #6a6e71"></div>
<div class="a" style="left:35px;top:437.15px;width:22px;height:22px;background:#e8eaeb"></div>
<svg class="a" style="left:36px;top:438.15px" width="20" height="20" viewBox="0 0 20 20"><path d="M1 5l3-4h15v14l-3 4H1z" fill="none" stroke="#a3a7a9" stroke-width="1.200"/><path d="M1 5h15v14M16 5l3-4M8 5v7h8" fill="none" stroke="#a3a7a9" stroke-width="1.200"/></svg>
<div class="a" style="left:64.5px;top:437.65px;width:138.5px;height:24px;overflow:hidden"><div class="a" style="left:0;top:0;font-size:18.500px;line-height:22px;color:#a3a7a9;transform:scaleX(0.881);transform-origin:0 50%">TWS_BOX_SKEL.PRT</div></div>
<div class="a" style="left:35px;top:471.1px;width:22px;height:22px;background:#e8eaeb"></div>
<svg class="a" style="left:35.5px;top:475.1px" width="21" height="14" viewBox="0 0 21 14"><path d="M1.500 12.500L6 1.500H19.500L15 12.500Z" fill="none" stroke="#9a9e98" stroke-width="1.5"/></svg>
<div class="a" style="left:64.5px;top:471.6px;font-size:18.500px;line-height:22px;color:#a3a7a9;transform:scaleX(0.899);transform-origin:0 50%">ASM_RIGHT</div>
<div class="a" style="left:35px;top:505.04999999999995px;width:22px;height:22px;background:#e8eaeb"></div>
<svg class="a" style="left:35.5px;top:509.04999999999995px" width="21" height="14" viewBox="0 0 21 14"><path d="M1.500 12.500L6 1.500H19.500L15 12.500Z" fill="none" stroke="#9a9e98" stroke-width="1.5"/></svg>
<div class="a" style="left:64.5px;top:505.54999999999995px;font-size:18.500px;line-height:22px;color:#a3a7a9;transform:scaleX(0.891);transform-origin:0 50%">ASM_TOP</div>
<div class="a" style="left:35px;top:539.0px;width:22px;height:22px;background:#e8eaeb"></div>
<svg class="a" style="left:35.5px;top:543.0px" width="21" height="14" viewBox="0 0 21 14"><path d="M1.500 12.500L6 1.500H19.500L15 12.500Z" fill="none" stroke="#9a9e98" stroke-width="1.5"/></svg>
<div class="a" style="left:64.5px;top:539.5px;font-size:18.500px;line-height:22px;color:#a3a7a9;transform:scaleX(0.894);transform-origin:0 50%">ASM_FRONT</div>
<div class="a" style="left:35px;top:572.95px;width:22px;height:22px;background:#e8eaeb"></div>
<svg class="a" style="left:34px;top:572.95px" width="24" height="24" viewBox="0 0 24 24"><g stroke="#a9ada5" stroke-width="1.400" fill="none"><path d="M8.500 2v14.500H22"/><path d="M8.500 16.500L2 23"/></g><g fill="#a9ada5"><path d="M8.500 0l-2.500 4h5z"/><path d="M24 16.500l-4-2.500v5z"/><path d="M0 24l1.200-4.500 3.200 3.200z"/></g></svg>
<div class="a" style="left:65px;top:573.45px;font-size:18.500px;line-height:22px;color:#a3a7a9;transform:scaleX(0.973);transform-origin:0 50%">TIMWONG</div>
<div class="a" style="left:15px;top:611.9px;width:0;height:0;border-top:6px solid transparent;border-bottom:6px solid transparent;border-left:10px solid #6a6e71"></div>
<div class="a" style="left:35px;top:606.9px;width:22px;height:22px;background:#e8eaeb"></div>
<svg class="a" style="left:36px;top:607.9px" width="21" height="21" viewBox="0 0 21 21"><path d="M1 6l5-5h14v13l-5 6H1z" fill="#dcded6" stroke="#a9ada5" stroke-width="1.200"/><path d="M1 6h14v14H1z" fill="#eeefe9" stroke="#a9ada5" stroke-width="1.200"/><path d="M15 6l5-5" stroke="#a9ada5"/></svg>
<svg class="a" style="left:41px;top:612.9px" width="12" height="12" viewBox="0 0 12 12"><path d="M1 4l3-3h7v7l-3 3H1z M1 4h7v7" fill="#f3f3ee" stroke="#a9ada5" stroke-width="1"/></svg>
<div class="a" style="left:65px;top:607.4px;font-size:18.500px;line-height:22px;color:#a3a7a9;transform:scaleX(0.899);transform-origin:0 50%">EARPHONE.ASM</div>
<div class="a" style="left:15px;top:645.85px;width:0;height:0;border-top:6px solid transparent;border-bottom:6px solid transparent;border-left:10px solid #6a6e71"></div>
<div class="a" style="left:35px;top:640.85px;width:22px;height:22px;background:#e8eaeb"></div>
<svg class="a" style="left:36px;top:641.85px" width="21" height="21" viewBox="0 0 21 21"><path d="M1 6l5-5h14v13l-5 6H1z" fill="#dcded6" stroke="#a9ada5" stroke-width="1.200"/><path d="M1 6h14v14H1z" fill="#eeefe9" stroke="#a9ada5" stroke-width="1.200"/><path d="M15 6l5-5" stroke="#a9ada5"/></svg>
<div class="a" style="left:65px;top:641.35px;font-size:18.500px;line-height:22px;color:#a3a7a9;transform:scaleX(0.831);transform-origin:0 50%">BT_PCB.PRT</div>
<div class="a" style="left:15px;top:679.8px;width:0;height:0;border-top:6px solid transparent;border-bottom:6px solid transparent;border-left:10px solid #6a6e71"></div>
<div class="a" style="left:35px;top:674.8px;width:22px;height:22px;background:#e8eaeb"></div>
<svg class="a" style="left:36px;top:675.8px" width="21" height="21" viewBox="0 0 21 21"><path d="M1 6l5-5h14v13l-5 6H1z" fill="#dcded6" stroke="#a9ada5" stroke-width="1.200"/><path d="M1 6h14v14H1z" fill="#eeefe9" stroke="#a9ada5" stroke-width="1.200"/><path d="M15 6l5-5" stroke="#a9ada5"/></svg>
<div class="a" style="left:65px;top:675.3px;font-size:18.500px;line-height:22px;color:#a3a7a9;transform:scaleX(0.846);transform-origin:0 50%">BT_COVER.PRT</div>
<div class="a" style="left:12.5px;top:715.75px;width:0;height:0;border-left:6px solid transparent;border-right:6px solid transparent;border-top:10px solid #4a4f52"></div>
<svg class="a" style="left:35px;top:708.75px" width="21" height="21" viewBox="0 0 21 21"><path d="M1 6l5-5h14v13l-5 6H1z" fill="#7fc1e6" stroke="#2f78a4" stroke-width="1.200"/><path d="M1 6h14v14H1z" fill="#bfe3f5" stroke="#2f78a4" stroke-width="1.200"/><path d="M15 6l5-5" stroke="#2f78a4"/></svg>
<svg class="a" style="left:46px;top:720.75px" width="12" height="12" viewBox="0 0 12 12"><rect x="0" y="0" width="12" height="12" fill="#7fd43f" opacity=".55"/><path d="M6 1.500L10.500 6 6 10.500 1.500 6z" fill="#d8f7c0" stroke="#0e6b12" stroke-width="1.800"/></svg>
<div class="a" style="left:65.5px;top:709.25px;font-size:18.500px;line-height:22px;color:#33373a;transform:scaleX(0.837);transform-origin:0 50%">TP_COVER.PRT</div>
<div class="a" style="left:43px;top:747.7px;width:0;height:0;border-top:6px solid transparent;border-bottom:6px solid transparent;border-left:10px solid #6a6e71"></div>
<svg class="a" style="left:62px;top:741.7px" width="25" height="24" viewBox="0 0 25 24"><path d="M5 1c-3 3-4 7-1 10M4 11l3-2M4 11l0.500 3" fill="none" stroke="#3a3f42" stroke-width="1.300"/><path d="M6 12c3-1 9-1 15-1 2 0 3 1 3 3v6c0 2-1 3-3 3H9c-3 0-5-2-5-5" fill="#fdfdfd" stroke="#4a4f52" stroke-width="1.300"/></svg>
<div class="a t" style="left:92.500px;top:744.7px;font-weight:400">材料</div>
<svg class="a" style="left:63px;top:780.6500000000001px" width="21" height="14" viewBox="0 0 21 14"><path d="M1.500 12.500L6 1.500H19.500L15 12.500Z" fill="none" stroke="#7d6125" stroke-width="1.5"/></svg>
<div class="a" style="left:93.5px;top:777.1500000000001px;font-size:18.500px;line-height:22px;color:#33373a;transform:scaleX(0.876);transform-origin:0 50%">RIGHT</div>
<svg class="a" style="left:63px;top:814.6px" width="21" height="14" viewBox="0 0 21 14"><path d="M1.500 12.500L6 1.500H19.500L15 12.500Z" fill="none" stroke="#7d6125" stroke-width="1.5"/></svg>
<div class="a" style="left:93.5px;top:811.1px;font-size:18.500px;line-height:22px;color:#33373a;transform:scaleX(0.849);transform-origin:0 50%">TOP</div>
<svg class="a" style="left:63px;top:848.55px" width="21" height="14" viewBox="0 0 21 14"><path d="M1.500 12.500L6 1.500H19.500L15 12.500Z" fill="none" stroke="#7d6125" stroke-width="1.5"/></svg>
<div class="a" style="left:93.5px;top:845.05px;font-size:18.500px;line-height:22px;color:#33373a;transform:scaleX(0.879);transform-origin:0 50%">FRONT</div>
<svg class="a" style="left:62px;top:877.5px" width="24" height="24" viewBox="0 0 24 24"><g stroke="#2b2f31" stroke-width="1.400" fill="none"><path d="M8.500 2v14.500H22"/><path d="M8.500 16.500L2 23"/></g><g fill="#2b2f31"><path d="M8.500 0l-2.500 4h5z"/><path d="M24 16.500l-4-2.500v5z"/><path d="M0 24l1.200-4.500 3.200 3.200z"/></g></svg>
<div class="a" style="left:94px;top:879.0px;font-size:18.500px;line-height:22px;color:#33373a;transform:scaleX(0.971);transform-origin:0 50%">TIMWONG</div>
<div class="a" style="left:60px;top:911.45px;width:143px;height:16.549999999999955px;overflow:hidden"><svg class="a" style="left:3px;top:1px" width="24" height="24" viewBox="0 0 24 24"><path d="M5 6l3-4h12v9" fill="none" stroke="#9aa0a3" stroke-width="1.200"/><path d="M1.500 6v10M1.500 6h4" stroke="#2b3033" stroke-width="2"/><path d="M5 7l5 5M10 8v4H6" stroke="#2b3033" stroke-width="1.300" fill="none"/><rect x="13" y="11" width="10" height="12" fill="#9fd3f0"/><rect x="11" y="11" width="2.500" height="12" fill="#1e3c50"/></svg><div class="a t" style="left:32.500px;top:3px;font-weight:400">外部复制几何 标</div></div>
<svg class="a" style="left:127px;top:742px" width="20" height="27" viewBox="0 0 20 27"><path d="M1.500 1.500v19l4.500-4 3.500 8 3.500-1.500-3.500-8h6.500z" fill="#fff" stroke="#1b1f21" stroke-width="1.500" stroke-linejoin="round"/></svg>
<div class="a" style="left:0;top:958px;width:265px;height:1px;background:#c5c9cb"></div>
<!-- TOOLBAR / STATUS -->
<div class="a" style="left:788px;top:246px;width:490px;height:45px;background:#f4f5f6"></div>
<div class="a" style="left:1166px;top:252px;width:33px;height:32px;background:#d3d6d8;border:1px solid #c2c6c8;box-sizing:border-box"></div>
<svg class="a" style="left:797.8px;top:256.0px" width="24" height="24" viewBox="0 0 24 24"><rect x="1" y="1" width="20" height="19" fill="#fbfcfc" stroke="#b5babd" stroke-width="1.400"/><circle cx="11" cy="10" r="6.500" fill="#fff" stroke="#5d96b8" stroke-width="1.600"/><path d="M16 15L22 21.5" stroke="#8f9598" stroke-width="3.600" stroke-linecap="round"/><path d="M16 15L22 21.5" stroke="#f1f3f4" stroke-width="1.400" stroke-linecap="round"/></svg>
<svg class="a" style="left:834.8px;top:256.0px" width="24" height="24" viewBox="0 0 24 24"><circle cx="9" cy="9" r="7.300" fill="#fff" stroke="#3f86b3" stroke-width="1.600"/><path d="M9 4.500v9M4.500 9h9" stroke="#14669c" stroke-width="2.600"/><path d="M14.5 14.5L22 22" stroke="#8f9598" stroke-width="3.600" stroke-linecap="round"/><path d="M14.5 14.5L22 22" stroke="#f1f3f4" stroke-width="1.400" stroke-linecap="round"/></svg>
<svg class="a" style="left:871.7px;top:256.0px" width="24" height="24" viewBox="0 0 24 24"><circle cx="9" cy="9" r="7.300" fill="#fff" stroke="#3f86b3" stroke-width="1.600"/><path d="M4.500 9h9" stroke="#14669c" stroke-width="2.600"/><path d="M14.5 14.5L22 22" stroke="#8f9598" stroke-width="3.600" stroke-linecap="round"/><path d="M14.5 14.5L22 22" stroke="#f1f3f4" stroke-width="1.400" stroke-linecap="round"/></svg>
<svg class="a" style="left:908.6px;top:256.0px" width="24" height="24" viewBox="0 0 24 24"><rect x="1" y="1" width="22" height="21" fill="#9cc8e2" stroke="#b5babd" stroke-width="1"/><rect x="1" y="1" width="22" height="3" fill="#d9dcde"/><path d="M1.500 21.500V5c9 0 14 3 21 4z" fill="#fbfcfd"/><path d="M5 21.500L19 9" stroke="#17608f" stroke-width="2"/><path d="M3 22l6-1.500-4-3z" fill="#17608f"/></svg>
<svg class="a" style="left:945.0px;top:256.0px" width="25" height="24" viewBox="0 0 25 24"><path d="M2 8l6-6h15v14l-6 6H2z" fill="#8ec5e6" stroke="#17608f" stroke-width="1.600" stroke-linejoin="round"/><path d="M2 8h15v14H2z" fill="#fdfefe" stroke="#17608f" stroke-width="1.600"/><path d="M17 8l6-6" stroke="#17608f" stroke-width="1.400"/><path d="M2 8l6-6h15l-6 6z" fill="#d5ebf7" stroke="#17608f" stroke-width="1.400"/></svg>
<div class="a" style="left:968px;top:279px;width:0;height:0;border-left:5px solid transparent;border-bottom:5px solid #4a4f52"></div>
<svg class="a" style="left:982.6px;top:256.0px" width="24" height="24" viewBox="0 0 24 24"><path d="M1 6l5-5h14v14l-5 5H1z" fill="#a8d6ee"/><path d="M1 6h14v14H1z" fill="#fbfdfe" stroke="#a8d6ee" stroke-width="1.200"/><path d="M15 6l5-5v14l-5 5z" fill="#7fbfe2"/><rect x="12.500" y="11.500" width="10" height="11" rx="1.500" fill="#f4f5f6" stroke="#9aa0a3" stroke-width="1"/><g stroke="#5d6265" stroke-width="1.300" stroke-dasharray="2 1.500"><path d="M14.500 14.500h6M14.500 17h6M14.500 19.500h6"/></g></svg>
<div class="a" style="left:1005px;top:279px;width:0;height:0;border-left:5px solid transparent;border-bottom:5px solid #4a4f52"></div>
<svg class="a" style="left:1020.8px;top:256.0px" width="24" height="24" viewBox="0 0 24 24"><g stroke="#a5aaad" stroke-width="1.300" fill="none"><rect x="1" y="1" width="17" height="19"/><path d="M1 5.500h17M1 10h17M1 14.500h17M6 1v19"/></g><path d="M9 12h4l1.500-2h4l1.500 2h3v10H9z" fill="#3a3f42"/><circle cx="16.500" cy="17" r="3.300" fill="#f1f3f4" stroke="#1b1f21" stroke-width="1"/><circle cx="16.500" cy="17" r="1.500" fill="#3a3f42"/></svg>
<svg class="a" style="left:1057.3px;top:256.0px" width="25" height="24" viewBox="0 0 25 24"><path d="M1 8l5-5h13v13l-5 5H1z" fill="#a8d6ee"/><path d="M1 8h13v13H1z" fill="#fdfefe" stroke="#8ec5e6" stroke-width="1.200"/><path d="M14 8l5-5v13l-5 5z" fill="#8ec5e6"/><path d="M24 11.500h-8M19.500 8l-3.500 3.500 3.500 3.500" stroke="#1b1f21" stroke-width="1.800" fill="none"/></svg>
<svg class="a" style="left:1094.7px;top:256.0px" width="24" height="24" viewBox="0 0 24 24"><path d="M1 4l15-3 7 2v12l-8 8-12-6z" fill="#a8d6ee" stroke="#5d9cc0" stroke-width="1"/><path d="M1 4l14 3 8-4M15 7v16" fill="none" stroke="#5d9cc0" stroke-width="1"/><path d="M5 9l7 2v8l-7-4z" fill="#d5ebf7" stroke="#5d9cc0" stroke-width="0.800"/><path d="M3 18L15 7" stroke="#d5ebf7" stroke-width="1"/></svg>
<svg class="a" style="left:1131.6px;top:256.0px" width="24" height="24" viewBox="0 0 24 24"><g stroke="#8b6a24" stroke-width="1.800"><path d="M1.500 1.500l5 5M6.500 1.500l-5 5"/><path d="M14 1l-2 4M11 8l-2 4M8 15l-2 4M5 21l-1 2"/></g><g stroke="#4f4a35" stroke-width="1.300" fill="none"><path d="M15 9v9h8M15 18l-5 4"/></g><g fill="#4f4a35"><path d="M15 7l-2.200 3.500h4.400z"/><path d="M24 18l-3.500-2.200v4.400z"/><path d="M9 23l1-4 3 3z"/></g></svg>
<div class="a" style="left:1153px;top:279px;width:0;height:0;border-left:5px solid transparent;border-bottom:5px solid #4a4f52"></div>
<svg class="a" style="left:1169.5px;top:256.0px" width="25" height="24" viewBox="0 0 25 24"><path d="M2 14.500L7 2.500H20.500L15.500 14.500Z" fill="none" stroke="#8b6a24" stroke-width="1.700"/><path d="M10 18c3-5.500 11-5.500 14 0-3 5.500-11 5.500-14 0z" fill="#2b2f31"/><circle cx="17" cy="18" r="2.600" fill="#fff"/><circle cx="17" cy="18" r="1.100" fill="#2b2f31"/></svg>
<svg class="a" style="left:1207.0px;top:255.5px" width="24" height="25" viewBox="0 0 24 25"><rect x="1" y="1" width="12" height="8" fill="#fbeed0" stroke="#c9b27c" stroke-width="1"/><path d="M13 5h9M19 5v7" stroke="#2b2f31" stroke-width="1.600" fill="none"/><path d="M15.500 9.500l3.500 4 3.500-4z" fill="#2b2f31"/><path d="M9 19c3-5.500 11-5.500 14 0-3 5.500-11 5.500-14 0z" fill="#2b2f31"/><circle cx="16" cy="19" r="2.600" fill="#fff"/><circle cx="16" cy="19" r="1.100" fill="#2b2f31"/></svg>
<svg class="a" style="left:1244.1px;top:255.5px" width="25" height="25" viewBox="0 0 25 25"><path d="M5 5l7 8 9-2M12 13l-7 7" stroke="#2b2f31" stroke-width="1.800" fill="none"/><circle cx="4.500" cy="4.500" r="3.300" fill="#7fc28a" stroke="#4f9d5c" stroke-width="0.800"/><circle cx="20.500" cy="11" r="3.300" fill="#ee8a7c" stroke="#c9594a" stroke-width="0.800"/><circle cx="4.500" cy="20" r="3.300" fill="#4ea3c9" stroke="#2a7ba3" stroke-width="0.800"/></svg>
<div class="a" style="left:281px;top:704px;font-family:'Noto Sans CJK SC','Liberation Sans',sans-serif;font-weight:300;color:#e4e9f0;font-size:14px;letter-spacing:0.250px;transform:scaleY(1.2);transform-origin:0 0">造型状态<span style="letter-spacing:5px"> :</span>主样式<span style="letter-spacing:7.500px;margin-left:3px">(+)</span></div>
<div class="a" style="left:281px;top:923px;font-family:'Noto Sans CJK SC','Liberation Sans',sans-serif;font-weight:300;color:#e4e9f0;font-size:14px;letter-spacing:0.250px;transform:scaleY(1.2);transform-origin:0 0">启用的零件<span style="margin-left:4px">:</span></div>
<svg class="a" style="left:0;top:0" width="1795" height="1010"><text transform="translate(369,942.700) scale(.58,1)" x="8.6 33.4 58.3 83.1 107.9 132.8 157.6 182.4" y="0" text-anchor="middle" font-family="'DejaVu Sans',sans-serif" font-weight="200" font-size="25.700" fill="#e4e9f0">TP_COVER</text></svg>
<div class="a" style="left:0;top:959px;width:1795px;height:1px;background:#b9bfc2"></div>
<div class="a" style="left:0;top:976px;width:30px;height:31px;background:#d3d6d8;border:1px solid #b9bdc0;box-sizing:border-box"></div>
<svg class="a" style="left:10px;top:980px" width="14" height="23" viewBox="0 0 14 23"><g fill="#fff" stroke="#2b2f31" stroke-width="1.400"><rect x="1" y="1" width="4" height="4"/><rect x="1" y="9.500" width="4" height="4"/><rect x="1" y="18" width="4" height="4"/><rect x="9" y="9.500" width="4" height="4"/></g><path d="M3 5v4.500M3 13.500v4.500M5 11.500h4" stroke="#2b2f31" stroke-width="1.200"/></svg>
<svg class="a" style="left:40px;top:979px" width="25" height="25" viewBox="0 0 25 25"><circle cx="12" cy="13" r="9.500" fill="#3f8fd6" stroke="#1d5fa3" stroke-width="1"/><path d="M5 9c3-3 8-3 10 0s-2 6-5 5-6 4-4 6" fill="#9fd0f3" opacity=".9"/><ellipse cx="12" cy="12.500" rx="12.500" ry="4.500" transform="rotate(-38 12 12.500)" fill="none" stroke="#1b4f86" stroke-width="2"/></svg>
<svg class="a" style="left:77px;top:980px" width="24" height="23" viewBox="0 0 24 23"><defs><linearGradient id="sq" x1="0" y1="0" x2="0" y2="1"><stop offset="0" stop-color="#fff"/><stop offset="1" stop-color="#cfd6da"/></linearGradient></defs><rect x="1.200" y="1.200" width="21" height="20.500" rx="1.500" fill="url(#sq)" stroke="#3f86b3" stroke-width="1.800"/></svg>
<div class="a" style="left:117px;top:976px;width:1px;height:31px;background:#a9aeb1"></div>
<div class="a" style="left:126px;top:980px;width:7px;height:7px;border-radius:50%;background:#1d5d8a"></div>
<div class="a" style="left:141px;top:975px;font-size:15.200px;color:#2b2f31;letter-spacing:-0.150px">TP_COVER 重新生成成功完成。</div>
<div class="a" style="left:1174px;top:965px;width:1px;height:42px;background:#c2c6c8"></div>
<svg class="a" style="left:1180px;top:976px" width="24" height="24" viewBox="0 0 24 24"><rect x="2" y="13" width="8" height="8" rx="1.500" fill="#fff" stroke="#5d8fb0" stroke-width="1.300"/><path d="M8 12l5-6 3 3zM13 9l5-6 3 3z" fill="#17608f"/></svg>
<div class="a" style="left:1260px;top:965px;width:1px;height:42px;background:#c2c6c8"></div>
<div class="a" style="left:1265px;top:967px;width:58px;height:38px;background:#f4f5f6;border:1px solid #c2c6c8;box-sizing:border-box"></div>
<div class="a" style="left:1303px;top:968px;width:1px;height:36px;background:#d5d8da"></div>
<svg class="a" style="left:1272px;top:975px" width="24" height="22" viewBox="0 0 24 22"><path d="M4 6h6v3h4V6h6l3 14h-8v-6h-6v6H1z" fill="#5d6265"/><rect x="5" y="1.500" width="4" height="5" fill="#3a3f42"/><rect x="15" y="1.500" width="4" height="5" fill="#3a3f42"/><path d="M3 12l1-5M21 12l-1-5" stroke="#9aa0a3" stroke-width="1.500"/></svg>
<div class="a tri" style="left:1307px;top:984px;border-top-color:#5d6265"></div>
<div class="a" style="left:1326px;top:965px;width:1px;height:42px;background:#c2c6c8"></div>
<div class="a" style="left:1331px;top:967px;width:56px;height:39px;background:#f1f3f4;border:1px solid #b9bdc0;box-sizing:border-box"></div>
<svg class="a" style="left:1346px;top:974px" width="26" height="26" viewBox="0 0 26 26"><path d="M1 7l5-5h18v17l-5 6H1z" fill="#fdfdfd" stroke="#3a3f42" stroke-width="1.400" stroke-linejoin="round"/><path d="M1 7h18v18M19 7l5-5" fill="none" stroke="#3a3f42" stroke-width="1.400"/><rect x="4.500" y="10.500" width="11" height="11" fill="#fbeed0" stroke="#c9a052" stroke-width="1"/><rect x="7" y="12.500" width="8" height="8" fill="#9fd3f0" stroke="#3f86b3" stroke-width="1"/></svg>
<div class="a t" style="left:1392px;top:978px;font-size:17.200px;letter-spacing:0">选择了 1 项</div>
<div class="a" style="left:1525px;top:969px;width:249px;height:35px;background:#f4f5f6;border:1px solid #a9aeb1;box-sizing:border-box"></div>
<div class="a" style="left:1752px;top:970px;width:1px;height:33px;background:#c9cdcf"></div>
<div class="a t" style="left:1536px;top:978px;font-size:16.500px">几何</div>
<div class="a tri" style="left:1757px;top:985px;border-top-color:#5d6265"></div>
<svg class="a" style="left:1781px;top:996px" width="14" height="14" viewBox="0 0 14 14"><g stroke="#a9aeb1" stroke-width="1.200"><path d="M13 1L1 13M13 5L5 13M13 9L9 13"/></g></svg>
<!-- 3D MODEL -->
<svg class="a" style="left:0;top:0" width="1795" height="1010" viewBox="0 0 1795 1010">
<defs>
<clipPath id="vp"><rect x="265" y="235" width="1530" height="724"/></clipPath>
<linearGradient id="gc1" x1="0" y1="0" x2="1" y2="0"><stop offset="0" stop-color="#d8cfb7"/><stop offset=".45" stop-color="#d2c9b1"/><stop offset=".8" stop-color="#b3aa92"/><stop offset="1" stop-color="#8f866f"/></linearGradient>
<linearGradient id="gc2" x1="0" y1="0" x2="1" y2="0"><stop offset="0" stop-color="#cfc6ae"/><stop offset=".5" stop-color="#d3cab2"/><stop offset=".82" stop-color="#aaa189"/><stop offset="1" stop-color="#89806a"/></linearGradient>
<linearGradient id="gtop" x1="0" y1="0" x2="1" y2="0"><stop offset="0" stop-color="#d4ccb6"/><stop offset="1" stop-color="#dcd4bf"/></linearGradient>
<linearGradient id="glp" gradientUnits="userSpaceOnUse" x1="712" y1="462" x2="790" y2="545"><stop offset="0" stop-color="#7f7866"/><stop offset=".3" stop-color="#a39b86"/><stop offset=".65" stop-color="#c4bca6"/><stop offset="1" stop-color="#d3cbb5"/></linearGradient>
<linearGradient id="gblob" gradientUnits="userSpaceOnUse" x1="800" y1="555" x2="892" y2="470"><stop offset="0" stop-color="#7f7866"/><stop offset=".55" stop-color="#9f9782"/><stop offset=".75" stop-color="#aea691"/><stop offset="1" stop-color="#c6beaa"/></linearGradient>
<linearGradient id="grp" gradientUnits="userSpaceOnUse" x1="855" y1="600" x2="1035" y2="560"><stop offset="0" stop-color="#958c76"/><stop offset=".3" stop-color="#c4bba3"/><stop offset=".7" stop-color="#d9d1ba"/><stop offset="1" stop-color="#c9c0a8"/></linearGradient>
<linearGradient id="grb" gradientUnits="userSpaceOnUse" x1="898" y1="540" x2="972" y2="540"><stop offset="0" stop-color="#8a826d"/><stop offset=".35" stop-color="#b5ac94"/><stop offset=".7" stop-color="#c9c0a8"/><stop offset="1" stop-color="#b8af97"/></linearGradient>
<linearGradient id="gside" gradientUnits="userSpaceOnUse" x1="960" y1="690" x2="1076" y2="560"><stop offset="0" stop-color="#b9b098"/><stop offset=".5" stop-color="#a0977f"/><stop offset="1" stop-color="#8b826b"/></linearGradient>
</defs>
<g clip-path="url(#vp)" fill="none" stroke-linejoin="round" stroke-linecap="round">
<path d="M555 622L703.8 895.3L1115 836.8L966.2 563.5Z" stroke="#bda36b" stroke-width="1.3" opacity="1"/><path d="M699 970L705.5 913.7L713.8 840L726 758L735 698L860 533L1000 366L964 640L852.5 780L774 877L696 970" stroke="#bda36b" stroke-width="1.3" opacity="1"/><path d="M623 502.8L1037.5 443.5L1003.5 717.5L589 776Z" stroke="#d5e4f7" stroke-width="1.3" opacity="1"/><path d="M750 396.5L712.5 673.8L857.5 945.5L895 673Z" stroke="#d5e4f7" stroke-width="1.3" opacity="1"/><path d="M767 975L777.3 880.3L792.4 780L801 721L1066 392L1030 667L912 808L869.2 863.6L779 975" stroke="#ea3c2c" stroke-width="1.5" opacity="1"/>
<path d="M684 598C685 599 687.2 600.9 689.7 604C692.2 607.1 694.7 612.4 699 616.6C703.3 620.8 710.2 625.9 715.7 629C721.2 632.1 727.1 634.2 732 635.4C736.9 636.6 741.3 636.8 744.8 636.4C748.3 636 749.5 633.9 753 633C756.5 632.1 760.8 630.2 765.6 631C770.4 631.8 779.3 636.8 782 638L800 610L700 580Z" fill="#beb59d" stroke="#14110c" stroke-width="1.4"/>
<path d="M783 625C782.7 627.2 782.3 628.8 781 638.5C779.7 648.2 777 667.2 775 683C773 698.8 769.9 722.6 768.7 733C767.5 743.4 767.1 741.8 768 745.6C768.9 749.4 770.9 752.9 774 756C777.1 759.1 781.9 762.4 786.4 764.3C790.9 766.2 794.1 767 801 767.4C807.9 767.8 820 767.6 828 766.4C836 765.2 843.1 762.4 848.8 760C854.5 757.6 858.8 762 862 752C865.2 742 866 718.7 868 700C870 681.3 873 650 874 640Z" fill="url(#gc1)" stroke="#14110c" stroke-width="1.5"/>
<path d="M815.5 651L807 704L800 766.4" stroke="#14110c" stroke-width="1.5"/>
<path d="M850 660L880 665L872 730L858 735Z" fill="#746c58" stroke="none"/>
<path d="M860 670C859.7 675 858.5 687.5 858 700C857.5 712.5 856.7 731.5 857 745C857.3 758.5 857.4 772.2 860 781C862.6 789.8 867.3 793.6 872.5 797.6C877.7 801.6 884.4 803.5 891 805C897.6 806.5 905.7 806.5 912 806.5C918.3 806.5 923.4 806.5 928.6 805C933.8 803.5 939.5 800.6 943 797.6C946.5 794.6 947.5 795.7 949.4 787C951.3 778.3 952.9 760.3 954.6 745.6C956.3 730.9 958.7 711.4 959.8 698.8C960.9 686.2 960.8 674.8 961 670Z" fill="url(#gc2)" stroke="#14110c" stroke-width="1.5"/>
<path d="M936 672.8L930.7 724.8L920.3 805.5" stroke="#14110c" stroke-width="1.5"/>
<path d="M848 658C852 672 858 680 866 684L872 664Z" fill="#9a917b" stroke="#14110c" stroke-width="1.2"/>
<path d="M747.9 416.6C752 413.8 757 413.2 769.8 413.8L1047.2 518.6C1062 524 1072 532 1076.8 548.2L1075.5 560.4C1075 563 1074 565 1072.1 567L1008.1 649.8L981.8 683.7C977 689.5 972 693.5 966 695.8C958 698.5 945 697.5 932.8 694.6L661.6 590.3C652 586.8 644 581 641.8 574.7C640.3 568 640.8 560 642.5 553.9C643.5 547 645 543 647 539.4Z" fill="#cbc2aa" stroke="#14110c" stroke-width="1.7"/>
<path d="M1076.8 548.2L1075.5 560.4C1075 563 1074 565 1072.1 567L1008.1 649.8L981.8 683.7C977 689.5 972 693.5 966 695.8C958 698.5 945 697.5 936 695.4L935.9 672.8C943 674.8 950 675.4 959.8 675.2C970 675 976 672.5 979.9 668.6L1008.1 634.8L1074 554C1076 551.5 1076.6 550 1076.8 548.2Z" fill="url(#gside)" stroke="none"/>
<path d="M747.9 416.6C752 413.8 757 413.2 769.8 413.8L1047.2 518.6C1062 524 1072 532 1076.8 548.2C1076.6 550 1076 551.5 1074 554L1008.1 634.8L979.9 668.6C976 672.5 970 675 959.8 675.2C950 675.4 943 674.8 935.9 672.8L663.7 568.5C655 565.5 646.5 559 644 551.8C643.5 547 644.5 543 647 539.4Z" fill="url(#gtop)" stroke="#14110c" stroke-width="1.6"/>
<path d="M662.5 568.2L661.8 590" stroke="#14110c" stroke-width="1.3"/>
<path d="M936 673L934.5 695" stroke="#14110c" stroke-width="1.3"/>
<path d="M979.9 668.6L979.9 685.6" stroke="#14110c" stroke-width="1.3"/>
<path d="M1008.1 634.8L1008.1 649.8" stroke="#14110c" stroke-width="1.3"/>
<path d="M1072.1 552.9L1072.1 567" stroke="#14110c" stroke-width="1.3"/>
<path d="M711.5 518.6C713.4 513.4 710.1 506.1 710.5 499.8C710.9 493.6 711.4 487 713.6 481.1C715.9 475.2 719.1 469.4 724 464.5C728.9 459.6 735.8 454.9 742.7 452C749.6 449.1 758.3 448 765.6 447.4C772.9 446.8 777.7 447.5 786.4 448.3C795.1 449.1 805.3 449.7 817.6 452C829.9 454.3 850.9 459.6 860 462C869.1 464.4 868 464.1 872.5 466.6C877 469.1 883.7 473.5 887 477C890.3 480.5 891.9 483.9 892.2 487.4C892.6 490.9 891.4 494.3 889.1 497.8C886.9 501.3 883.6 505.1 878.7 508.2C873.9 511.3 864.6 513 860 516.5C855.4 520 853.8 524.9 850.9 529C848 533.1 845.6 537.9 842.5 541.4C839.4 544.9 835.9 547 832.1 549.8C828.3 552.6 822.8 555.6 819.7 558C816.6 560.4 816.5 561.6 813.4 564.3C810.3 567 805.9 571.2 801 574.3C796.1 577.4 790.2 580.4 784.3 583C778.4 585.6 770.5 588.5 765.6 589.7C760.8 590.9 759 591.1 755.2 590.3C751.4 589.5 747.2 587.7 742.7 585.1C738.2 582.5 733.4 578.2 728.2 574.7C723 571.2 717.9 567.4 711.5 564.3C705.1 561.2 693 559.1 689.7 556C686.4 552.9 690.2 549.8 691.8 545.6C693.3 541.4 695.7 535.5 699 531C702.3 526.5 709.6 523.8 711.5 518.6Z" fill="#d3cbb5" stroke="#14110c" stroke-width="1.6"/>
<path d="M765.6 447.4C761.8 448.2 749.6 449.1 742.7 452C735.8 454.9 728.9 459.6 724 464.5C719.1 469.4 715.9 475.2 713.6 481.1C711.4 487 710.9 493.4 710.5 499.8C710.1 506.2 711.3 516.3 711.5 519.6C712.5 521.2 714.6 525.5 717.7 529C720.8 532.5 724 536.1 730.2 540.4C736.5 544.7 747.2 550.8 755.2 555C763.2 559.2 770.4 562.2 778 565.4C785.6 568.6 797.2 572.8 801 574.3C800 573 797.5 571.9 794.7 566.4C791.9 560.9 787.8 551.8 784.3 541.4C780.8 531 776.6 515.4 774 504C771.4 492.6 770.1 482.2 768.7 472.8C767.3 463.4 766.1 451.6 765.6 447.4Z" fill="url(#glp)" stroke="none"/>
<path d="M689.7 556C691.8 545.6 699 531 711.5 519.6L712 548L700 560Z" fill="#8d856f" stroke="none"/>
<path d="M711.5 520C712.6 517.9 714.6 525.6 717.7 529C720.8 532.4 724 536.1 730.2 540.4C736.5 544.7 747.2 550.8 755.2 555C763.2 559.2 770.4 562.2 778 565.4C785.6 568.6 800 571.4 801 574.3C802 577.2 790.2 580.4 784.3 583C778.4 585.6 770.5 588.5 765.6 589.7C760.8 590.9 759 591.1 755.2 590.3C751.4 589.5 747.2 587.7 742.7 585.1C738.2 582.5 732.7 577.9 728.2 574.7C723.8 571.5 718.9 571.5 716 566C713.1 560.5 711.8 549.2 711 541.5C710.2 533.8 710.4 522.1 711.5 520Z" fill="#d6ceb8" stroke="none"/>
<path d="M860 479C857.1 482.2 854.1 485.9 848.8 489.4C843.5 492.9 834.2 496 828 499.8C821.8 503.6 815.5 507.8 811.3 512.3C807.1 516.8 803.9 522 803 526.9C802.1 531.8 803.7 537.8 806.1 541.4C808.5 545 813.3 547.3 817.6 548.7C821.9 550.1 828 551 832.1 549.8C836.2 548.6 839.4 544.9 842.5 541.4C845.6 537.9 848 533.1 850.9 529C853.8 524.9 855.4 520.5 860 517C864.6 513.5 873.9 511.4 878.7 508.2C883.6 505 886.9 501.3 889.1 497.8C891.4 494.3 892.6 490.9 892.2 487.4C891.9 483.9 890.3 480.4 887 477C883.7 473.6 876 468.2 872.5 467C869 465.8 868.1 468 866 470C863.9 472 862.9 475.8 860 479Z" fill="url(#gblob)" stroke="none"/>
<path d="M866 471C865 472.3 862.9 475.9 860 479C857.1 482.1 854.1 485.9 848.8 489.4C843.5 492.9 834.2 496 828 499.8C821.8 503.6 815.5 507.8 811.3 512.3C807.1 516.8 803.9 522 803 526.9C802.1 531.8 803.7 537.8 806.1 541.4C808.5 545 813.3 547.3 817.6 548.7C821.9 550.1 828 551 832.1 549.8C836.2 548.6 839.4 544.9 842.5 541.4C845.6 537.9 848 533.1 850.9 529C853.8 524.9 858.5 519 860 517" stroke="#14110c" stroke-width="1.6"/>
<path d="M765.6 447.4C766.1 451.6 767.3 463.4 768.7 472.8C770.1 482.2 771.4 492.6 774 504C776.6 515.4 780.8 531 784.3 541.4C787.8 551.8 791.9 560.9 794.7 566.4C797.5 571.9 800 573 801 574.3" stroke="#14110c" stroke-width="1.5"/>
<path d="M711.5 519.6C712.5 521.2 714.6 525.5 717.7 529C720.8 532.5 724 536.1 730.2 540.4C736.5 544.7 747.2 550.8 755.2 555C763.2 559.2 770.4 562.2 778 565.4C785.6 568.6 797.2 572.8 801 574.3" stroke="#14110c" stroke-width="1.5"/>
<path d="M711.5 541.5C712.5 544.2 715.3 552.8 717.7 558C720.1 563.2 723.6 569.1 726 572.6C728.4 576.1 731.2 577.9 732.3 579" stroke="#14110c" stroke-width="1.4"/>
<path d="M711.5 522L710.5 541.4M702.2 529V545.6M692.8 556L711.5 543.5M697 557L711.5 545.6" stroke="#14110c" stroke-width="1.3"/>
<path d="M877.7 468.6L872.5 506.1" stroke="#14110c" stroke-width="1.4"/>
<path d="M711.5 518.6C713.4 513.4 710.1 506.1 710.5 499.8C710.9 493.6 711.4 487 713.6 481.1C715.9 475.2 719.1 469.4 724 464.5C728.9 459.6 735.8 454.9 742.7 452C749.6 449.1 758.3 448 765.6 447.4C772.9 446.8 777.7 447.5 786.4 448.3C795.1 449.1 805.3 449.7 817.6 452C829.9 454.3 850.9 459.6 860 462C869.1 464.4 868 464.1 872.5 466.6C877 469.1 883.7 473.5 887 477C890.3 480.5 891.9 483.9 892.2 487.4C892.6 490.9 891.4 494.3 889.1 497.8C886.9 501.3 883.6 505.1 878.7 508.2C873.9 511.3 864.6 513 860 516.5C855.4 520 853.8 524.9 850.9 529C848 533.1 845.6 537.9 842.5 541.4C839.4 544.9 835.9 547 832.1 549.8C828.3 552.6 822.8 555.6 819.7 558C816.6 560.4 816.5 561.6 813.4 564.3C810.3 567 805.9 571.2 801 574.3C796.1 577.4 790.2 580.4 784.3 583C778.4 585.6 770.5 588.5 765.6 589.7C760.8 590.9 759 591.1 755.2 590.3C751.4 589.5 747.2 587.7 742.7 585.1C738.2 582.5 733.4 578.2 728.2 574.7C723 571.2 717.9 567.4 711.5 564.3C705.1 561.2 693 559.1 689.7 556C686.4 552.9 690.2 549.8 691.8 545.6C693.3 541.4 695.7 535.5 699 531C702.3 526.5 709.6 523.8 711.5 518.6Z" fill="none" stroke="#14110c" stroke-width="1.6"/>
<path d="M899.5 524.8C900.2 521.6 899.9 512.8 901.6 508.2C903.3 503.6 906.1 499.9 909.9 497.5C913.7 495.1 919 494.1 924.5 493.6C930 493.1 937.3 493.2 943.2 494.6C949.1 496 954.2 499.6 959.8 501.9C965.3 504.2 970.3 505.2 976.5 508.2C982.7 511.2 991 515.8 996.9 520C1002.8 524.2 1006.6 528.8 1011.9 533.2C1017.2 537.6 1024.7 541.6 1028.8 546.3C1032.9 551 1035.3 556.4 1036.4 561.4C1037.5 566.4 1037 571.4 1035.4 576.4C1033.8 581.4 1030.9 587.1 1027 591.5C1023.1 595.9 1018.2 599.3 1011.9 602.8C1005.6 606.2 995.6 610 989.3 612.2C983 614.4 977.4 614.4 974.3 616C971.2 617.6 972.4 618.5 970.5 621.6C968.6 624.7 966.1 631 963 634.8C959.9 638.6 955.5 641.7 951.7 644.2C947.9 646.7 948.5 650.4 940.4 649.8C932.2 649.2 913.5 643.2 902.8 640.4C892.1 637.6 883.6 635.1 876.4 632.9C869.2 630.7 863.1 630.3 859.5 627.2C855.9 624.1 855.6 618.8 854.8 614.1C854 609.4 853.8 603.7 854.8 599C855.8 594.3 858.6 589.7 860.5 585.9C862.4 582.1 865.3 579.8 866.1 576.4C866.9 573 864.4 568.7 865.2 565.2C866 561.8 866.7 560.4 870.8 555.7C874.9 551 885.2 541.6 889.6 536.9C894 532.2 895.5 529.5 897.1 527.5C898.8 525.5 898.8 528 899.5 524.8Z" fill="url(#grp)" stroke="#14110c" stroke-width="1.6"/>
<path d="M866.1 576.4C868 581.4 871.5 590 876.4 595.3C881.3 600.6 887.1 605.4 895.3 608.4C903.5 611.4 915.4 613.4 925.4 613.1C935.4 612.8 944.9 610.4 955.5 606.5C966.1 602.6 979.3 595.9 989.3 589.6C999.3 583.3 1009.4 574.9 1015.7 568.9C1022 562.9 1024.8 557.7 1027 553.9C1029.2 550.1 1031.3 549.8 1028.8 546.3C1026.3 542.8 1017.2 537.6 1011.9 533.2C1006.6 528.8 1002.8 524.2 996.9 520C991 515.8 982.7 511.2 976.5 508.2C970.3 505.2 965.3 504.2 959.8 501.9C954.2 499.6 949.1 496 943.2 494.6C937.3 493.2 930 493.1 924.5 493.6C919 494.1 913.7 495.1 909.9 497.5C906.1 499.9 903.3 503.6 901.6 508.2C899.9 512.8 901.5 520 899.5 524.8C897.5 529.6 894.4 531.8 889.6 536.9C884.8 542 874.9 551 870.8 555.7C866.7 560.4 866 561.8 865.2 565.2C864.4 568.7 864.2 571.4 866.1 576.4Z" fill="#d9d1ba" stroke="none" opacity=".75"/>
<path d="M866.1 576.4C867.8 579.5 871.5 590 876.4 595.3C881.3 600.6 887.1 605.4 895.3 608.4C903.5 611.4 915.4 613.4 925.4 613.1C935.4 612.8 944.9 610.4 955.5 606.5C966.1 602.6 979.3 595.9 989.3 589.6C999.3 583.3 1009.4 574.9 1015.7 568.9C1022 562.9 1024.8 557.7 1027 553.9C1029.2 550.1 1028.5 547.6 1028.8 546.3" stroke="#14110c" stroke-width="1.5"/>
<path d="M899.5 524.8C900 518.6 899.9 512.8 901.6 508.2C903.3 503.6 906.1 499.9 909.9 497.5C913.7 495.1 919 494.1 924.5 493.6C930 493.1 937.7 493.5 943.2 494.6C948.8 495.8 955 496.5 957.8 500.5C960.6 504.5 958.4 512.5 959.8 518.6C961.2 524.7 964.2 531.1 966 537.3C967.8 543.5 969.8 550.5 970.5 556C971.2 561.5 971.3 566.1 970.2 570.6C969.1 575.1 967.1 579.7 964 583C960.9 586.3 956 588.6 951.5 590.3C947 592 941.9 593.8 937 593.4C932.1 593 926.6 590.4 922.4 588C918.2 585.6 915.5 583.2 912 578.9C908.5 574.6 903.9 567.8 901.6 562.2C899.4 556.7 898.9 551.8 898.5 545.6C898.1 539.4 899 531 899.5 524.8Z" fill="url(#grb)" stroke="#14110c" stroke-width="1.6"/>
<path d="M923.5 494L919.7 520L914 579.5" stroke="#14110c" stroke-width="1.4"/>
<path d="M944 495L940.4 520L932.9 592.4" stroke="#14110c" stroke-width="1.4"/>
<path d="M959.8 502L958.8 520" stroke="#14110c" stroke-width="1.4"/>
<path d="M902.8 612.2C906.6 614.4 918.4 622.2 925.4 625.4C932.4 628.6 938.7 629.9 945 631.5C951.3 633.1 960 634.2 963 634.8" stroke="#14110c" stroke-width="1.4"/>
<path d="M854.8 599C855.3 600.5 855.8 604.3 858 608C860.2 611.7 864.9 616.9 868 621C871.1 625.1 875 630.9 876.4 632.9" stroke="#14110c" stroke-width="1.3"/>
<path d="M870.8 685.6L875.5 673.3L912.2 687.5L908.4 700.6L902.8 703.5Z" fill="#e1dac6" stroke="#14110c" stroke-width="1.2"/>
<path d="M872.5 681L906 694.5M912.2 687.5L919 690" stroke="#14110c" stroke-width="1"/>
<clipPath id="mclip"><path d="M747.9 416.6C752 413.8 757 413.2 769.8 413.8L1047.2 518.6C1062 524 1072 532 1076.8 548.2L1075.5 560.4C1075 563 1074 565 1072.1 567L1008.1 649.8L981.8 683.7C977 689.5 972 693.5 966 695.8C958 698.5 945 697.5 932.8 694.6L661.6 590.3C652 586.8 644 581 641.8 574.7C640.3 568 640.8 560 642.5 553.9C643.5 547 645 543 647 539.4Z"/><path d="M783 625C782.7 627.2 782.3 628.8 781 638.5C779.7 648.2 777 667.2 775 683C773 698.8 769.9 722.6 768.7 733C767.5 743.4 767.1 741.8 768 745.6C768.9 749.4 770.9 752.9 774 756C777.1 759.1 781.9 762.4 786.4 764.3C790.9 766.2 794.1 767 801 767.4C807.9 767.8 820 767.6 828 766.4C836 765.2 843.1 762.4 848.8 760C854.5 757.6 858.8 762 862 752C865.2 742 866 718.7 868 700C870 681.3 873 650 874 640Z"/><path d="M860 670C859.7 675 858.5 687.5 858 700C857.5 712.5 856.7 731.5 857 745C857.3 758.5 857.4 772.2 860 781C862.6 789.8 867.3 793.6 872.5 797.6C877.7 801.6 884.4 803.5 891 805C897.6 806.5 905.7 806.5 912 806.5C918.3 806.5 923.4 806.5 928.6 805C933.8 803.5 939.5 800.6 943 797.6C946.5 794.6 947.5 795.7 949.4 787C951.3 778.3 952.9 760.3 954.6 745.6C956.3 730.9 958.7 711.4 959.8 698.8C960.9 686.2 960.8 674.8 961 670Z"/></clipPath>
<g clip-path="url(#mclip)"><path d="M555 622L703.8 895.3L1115 836.8L966.2 563.5Z" stroke="#bda36b" stroke-width="1.2" opacity="0.7"/><path d="M699 970L705.5 913.7L713.8 840L726 758L735 698L860 533L1000 366L964 640L852.5 780L774 877L696 970" stroke="#bda36b" stroke-width="1.2" opacity="0.7"/><path d="M623 502.8L1037.5 443.5L1003.5 717.5L589 776Z" stroke="#d5e4f7" stroke-width="1.2" opacity="0.3"/><path d="M750 396.5L712.5 673.8L857.5 945.5L895 673Z" stroke="#d5e4f7" stroke-width="1.2" opacity="0.3"/><path d="M767 975L777.3 880.3L792.4 780L801 721L1066 392L1030 667L912 808L869.2 863.6L779 975" stroke="#ea3c2c" stroke-width="1.4" opacity="0.95"/></g>
</g>
<g clip-path="url(#vp)" font-family="'DejaVu Sans','Liberation Sans',sans-serif" font-weight="200" text-anchor="middle">
<text transform="translate(557,622.5) scale(0.5,1)" x="10 43.6 77.2" y="0" fill="#b8a16d" font-size="31">TOP</text>
<text transform="translate(737.5,697) scale(0.5,1)" x="10 44 78 112" y="0" fill="#b8a16d" font-size="31">DTM1</text>
<text transform="translate(802,722) scale(0.5,1)" x="10 44 78 112" y="0" fill="#f0402e" font-size="31">DTM3</text>
<text transform="translate(898.5,672) scale(0.5,1)" x="10 44 78 112 146" y="0" fill="#a08a58" font-size="31">FRONT</text>
<text transform="translate(1004.5,718.8) scale(0.5,1)" x="10 44.6 79.2 113.8 148.4" y="0" fill="#b8a16d" font-size="31">RIGHT</text>
</g>
</svg>
</body></html>
